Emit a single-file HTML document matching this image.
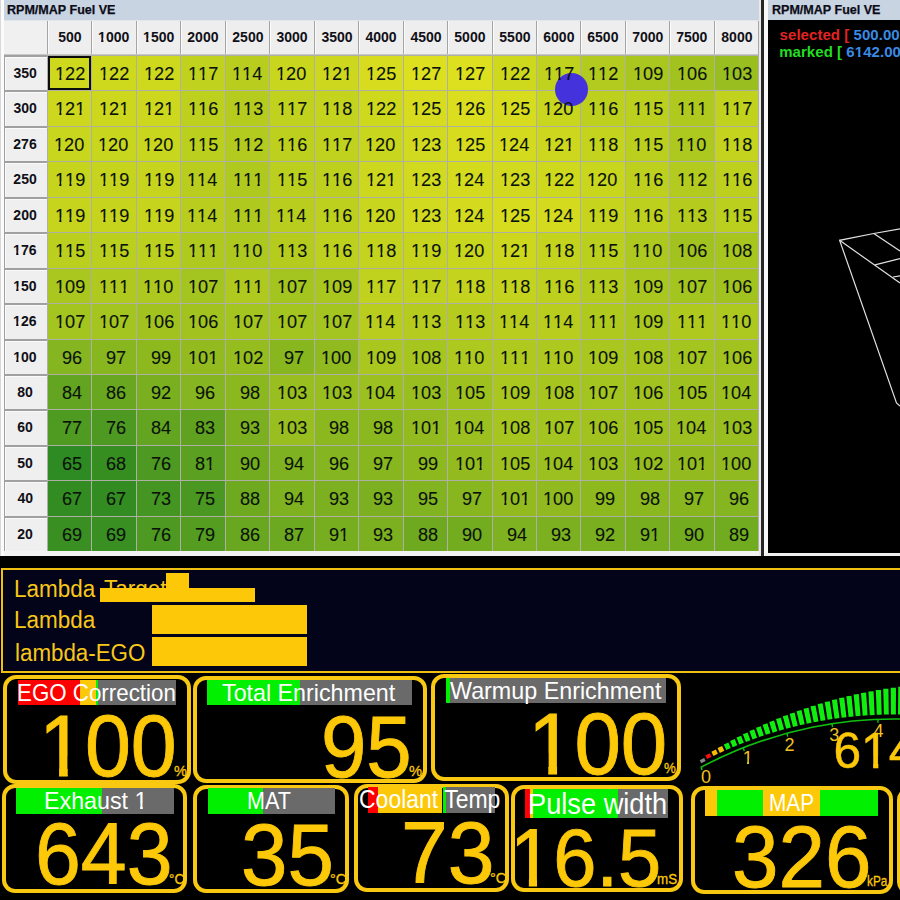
<!DOCTYPE html><html><head><meta charset="utf-8"><style>
html,body{margin:0;padding:0}
body{width:900px;height:900px;background:#000;overflow:hidden;position:relative;font-family:"Liberation Sans",sans-serif}
div{position:absolute;box-sizing:border-box}
.t{white-space:nowrap;line-height:1;transform-origin:0 0}
i.O{font-style:normal;display:inline-block;clip-path:polygon(-5% -5%,105% -5%,105% 0.6em,0.348em 0.6em,0.348em 110%,0.243em 110%,0.243em 0.6em,-5% 0.6em)}
i.ob{font-style:normal;display:inline-block;clip-path:polygon(-5% -5%,105% -5%,105% 0.55em,0.385em 0.55em,0.385em 110%,0.22em 110%,0.22em 0.55em,-5% 0.55em)}
i.o{font-style:normal;display:inline-block;clip-path:polygon(-5% -5%,105% -5%,105% 0.55em,0.355em 0.55em,0.355em 110%,0.238em 110%,0.238em 0.55em,-5% 0.55em)}
.g{border:4.2px solid #f9c810;border-radius:13px}
</style></head><body>

<div style="left:0;top:0;width:762px;height:556px;background:#f0f0f0"></div>
<div style="left:0;top:0;width:1px;height:556px;background:#d8d8d8"></div>
<div style="left:1px;top:0;width:2.5px;height:556px;background:#fbfbfb"></div>
<div style="left:3.5px;top:0;width:757px;height:20px;background:#c8d4e1"></div>
<div style="left:3.5px;top:20px;width:757px;height:1px;background:#e2e6ea"></div>
<div class="t" style="left:6.56px;top:3.48px;font-size:13.60px;color:#0c0c18;font-weight:bold;transform:scaleX(0.9224);-webkit-text-stroke:0.25px #0c0c18">RPM/MAP Fuel VE</div>
<div style="left:47.00px;top:21px;width:44.49px;height:34px;background:#eeeeee;border-left:1.8px solid #a4a4a4"><div style="left:0;top:0;width:1.3px;height:33px;background:#fafafa"></div></div>
<div class="t" style="left:58.24px;top:30.35px;font-size:14.00px;color:#101018;font-weight:bold;transform:scaleX(1.0000)">500</div>
<div style="left:91.00px;top:21px;width:44.49px;height:34px;background:#eeeeee;border-left:1.8px solid #a4a4a4"><div style="left:0;top:0;width:1.3px;height:33px;background:#fafafa"></div></div>
<div class="t" style="left:98.08px;top:30.35px;font-size:14.00px;color:#101018;font-weight:bold;transform:scaleX(1.0000)"><i class="ob">1</i>000</div>
<div style="left:136.00px;top:21px;width:44.49px;height:34px;background:#eeeeee;border-left:1.8px solid #a4a4a4"><div style="left:0;top:0;width:1.3px;height:33px;background:#fafafa"></div></div>
<div class="t" style="left:143.08px;top:30.35px;font-size:14.00px;color:#101018;font-weight:bold;transform:scaleX(1.0000)"><i class="ob">1</i>500</div>
<div style="left:180.00px;top:21px;width:44.49px;height:34px;background:#eeeeee;border-left:1.8px solid #a4a4a4"><div style="left:0;top:0;width:1.3px;height:33px;background:#fafafa"></div></div>
<div class="t" style="left:187.32px;top:30.35px;font-size:14.00px;color:#101018;font-weight:bold;transform:scaleX(1.0000)">2000</div>
<div style="left:225.00px;top:21px;width:44.49px;height:34px;background:#eeeeee;border-left:1.8px solid #a4a4a4"><div style="left:0;top:0;width:1.3px;height:33px;background:#fafafa"></div></div>
<div class="t" style="left:232.32px;top:30.35px;font-size:14.00px;color:#101018;font-weight:bold;transform:scaleX(1.0000)">2500</div>
<div style="left:269.00px;top:21px;width:44.49px;height:34px;background:#eeeeee;border-left:1.8px solid #a4a4a4"><div style="left:0;top:0;width:1.3px;height:33px;background:#fafafa"></div></div>
<div class="t" style="left:276.40px;top:30.35px;font-size:14.00px;color:#101018;font-weight:bold;transform:scaleX(1.0000)">3000</div>
<div style="left:314.00px;top:21px;width:44.49px;height:34px;background:#eeeeee;border-left:1.8px solid #a4a4a4"><div style="left:0;top:0;width:1.3px;height:33px;background:#fafafa"></div></div>
<div class="t" style="left:321.40px;top:30.35px;font-size:14.00px;color:#101018;font-weight:bold;transform:scaleX(1.0000)">3500</div>
<div style="left:358.00px;top:21px;width:44.49px;height:34px;background:#eeeeee;border-left:1.8px solid #a4a4a4"><div style="left:0;top:0;width:1.3px;height:33px;background:#fafafa"></div></div>
<div class="t" style="left:365.45px;top:30.35px;font-size:14.00px;color:#101018;font-weight:bold;transform:scaleX(1.0000)">4000</div>
<div style="left:403.00px;top:21px;width:44.49px;height:34px;background:#eeeeee;border-left:1.8px solid #a4a4a4"><div style="left:0;top:0;width:1.3px;height:33px;background:#fafafa"></div></div>
<div class="t" style="left:410.45px;top:30.35px;font-size:14.00px;color:#101018;font-weight:bold;transform:scaleX(1.0000)">4500</div>
<div style="left:447.00px;top:21px;width:44.49px;height:34px;background:#eeeeee;border-left:1.8px solid #a4a4a4"><div style="left:0;top:0;width:1.3px;height:33px;background:#fafafa"></div></div>
<div class="t" style="left:454.34px;top:30.35px;font-size:14.00px;color:#101018;font-weight:bold;transform:scaleX(1.0000)">5000</div>
<div style="left:492.00px;top:21px;width:44.49px;height:34px;background:#eeeeee;border-left:1.8px solid #a4a4a4"><div style="left:0;top:0;width:1.3px;height:33px;background:#fafafa"></div></div>
<div class="t" style="left:499.34px;top:30.35px;font-size:14.00px;color:#101018;font-weight:bold;transform:scaleX(1.0000)">5500</div>
<div style="left:536.00px;top:21px;width:44.49px;height:34px;background:#eeeeee;border-left:1.8px solid #a4a4a4"><div style="left:0;top:0;width:1.3px;height:33px;background:#fafafa"></div></div>
<div class="t" style="left:543.30px;top:30.35px;font-size:14.00px;color:#101018;font-weight:bold;transform:scaleX(1.0000)">6000</div>
<div style="left:580.00px;top:21px;width:44.49px;height:34px;background:#eeeeee;border-left:1.8px solid #a4a4a4"><div style="left:0;top:0;width:1.3px;height:33px;background:#fafafa"></div></div>
<div class="t" style="left:587.30px;top:30.35px;font-size:14.00px;color:#101018;font-weight:bold;transform:scaleX(1.0000)">6500</div>
<div style="left:625.00px;top:21px;width:44.49px;height:34px;background:#eeeeee;border-left:1.8px solid #a4a4a4"><div style="left:0;top:0;width:1.3px;height:33px;background:#fafafa"></div></div>
<div class="t" style="left:632.26px;top:30.35px;font-size:14.00px;color:#101018;font-weight:bold;transform:scaleX(1.0000)">7000</div>
<div style="left:669.00px;top:21px;width:44.49px;height:34px;background:#eeeeee;border-left:1.8px solid #a4a4a4"><div style="left:0;top:0;width:1.3px;height:33px;background:#fafafa"></div></div>
<div class="t" style="left:676.26px;top:30.35px;font-size:14.00px;color:#101018;font-weight:bold;transform:scaleX(1.0000)">7500</div>
<div style="left:714.00px;top:21px;width:44.49px;height:34px;background:#eeeeee;border-left:1.8px solid #a4a4a4"><div style="left:0;top:0;width:1.3px;height:33px;background:#fafafa"></div></div>
<div class="t" style="left:721.34px;top:30.35px;font-size:14.00px;color:#101018;font-weight:bold;transform:scaleX(1.0000)">8000</div>
<div style="left:758.00px;top:21px;width:1.3px;height:34px;background:#a4a4a4"></div>
<div style="left:3.5px;top:54.3px;width:754.94px;height:1px;background:#c8c8c8"></div>
<div style="left:3.5px;top:55.00px;width:1.5px;height:496.16px;background:#a8a8a8"></div>
<div style="left:47px;top:55px;width:712px;height:497px;background:#aeb0a6"></div>
<div style="left:3.5px;top:55px;width:43.50px;height:497px;background:#a0a0a0"></div>
<div style="left:5px;top:56.5px;width:42px;height:33.5px;background:#efefef;border-top:1px solid #fafafa;border-left:1px solid #fafafa"></div>
<div class="t" style="left:13.45px;top:65.75px;font-size:14.00px;color:#101018;font-weight:bold;transform:scaleX(1.0000)">350</div>
<div style="left:48px;top:56px;width:43px;height:34px;background:rgb(206,217,30)"></div>
<div style="left:92px;top:56px;width:44px;height:34px;background:rgb(206,217,30)"></div>
<div style="left:137px;top:56px;width:43px;height:34px;background:rgb(206,217,30)"></div>
<div style="left:181px;top:56px;width:44px;height:34px;background:rgb(192,210,30)"></div>
<div style="left:226px;top:56px;width:43px;height:34px;background:rgb(184,205,30)"></div>
<div style="left:270px;top:56px;width:44px;height:34px;background:rgb(201,214,30)"></div>
<div style="left:315px;top:56px;width:43px;height:34px;background:rgb(204,215,30)"></div>
<div style="left:359px;top:56px;width:44px;height:34px;background:rgb(215,221,30)"></div>
<div style="left:404px;top:56px;width:43px;height:34px;background:rgb(221,224,30)"></div>
<div style="left:448px;top:56px;width:44px;height:34px;background:rgb(221,224,30)"></div>
<div style="left:493px;top:56px;width:43px;height:34px;background:rgb(206,217,30)"></div>
<div style="left:537px;top:56px;width:43px;height:34px;background:rgb(192,210,30)"></div>
<div style="left:581px;top:56px;width:44px;height:34px;background:rgb(178,203,30)"></div>
<div style="left:626px;top:56px;width:43px;height:34px;background:rgb(170,199,31)"></div>
<div style="left:670px;top:56px;width:44px;height:34px;background:rgb(161,194,31)"></div>
<div style="left:715px;top:56px;width:43px;height:34px;background:rgb(153,190,31)"></div>
<div style="left:5px;top:91.5px;width:42px;height:34.5px;background:#efefef;border-top:1px solid #fafafa;border-left:1px solid #fafafa"></div>
<div class="t" style="left:13.45px;top:100.75px;font-size:14.00px;color:#101018;font-weight:bold;transform:scaleX(1.0000)">300</div>
<div style="left:48px;top:91px;width:43px;height:35px;background:rgb(204,215,30)"></div>
<div style="left:92px;top:91px;width:44px;height:35px;background:rgb(204,215,30)"></div>
<div style="left:137px;top:91px;width:43px;height:35px;background:rgb(204,215,30)"></div>
<div style="left:181px;top:91px;width:44px;height:35px;background:rgb(189,208,30)"></div>
<div style="left:226px;top:91px;width:43px;height:35px;background:rgb(181,204,30)"></div>
<div style="left:270px;top:91px;width:44px;height:35px;background:rgb(192,210,30)"></div>
<div style="left:315px;top:91px;width:43px;height:35px;background:rgb(195,211,30)"></div>
<div style="left:359px;top:91px;width:44px;height:35px;background:rgb(206,217,30)"></div>
<div style="left:404px;top:91px;width:43px;height:35px;background:rgb(215,221,30)"></div>
<div style="left:448px;top:91px;width:44px;height:35px;background:rgb(218,222,30)"></div>
<div style="left:493px;top:91px;width:43px;height:35px;background:rgb(215,221,30)"></div>
<div style="left:537px;top:91px;width:43px;height:35px;background:rgb(201,214,30)"></div>
<div style="left:581px;top:91px;width:44px;height:35px;background:rgb(189,208,30)"></div>
<div style="left:626px;top:91px;width:43px;height:35px;background:rgb(187,207,30)"></div>
<div style="left:670px;top:91px;width:44px;height:35px;background:rgb(175,201,31)"></div>
<div style="left:715px;top:91px;width:43px;height:35px;background:rgb(192,210,30)"></div>
<div style="left:5px;top:127.5px;width:42px;height:33.5px;background:#efefef;border-top:1px solid #fafafa;border-left:1px solid #fafafa"></div>
<div class="t" style="left:13.33px;top:136.75px;font-size:14.00px;color:#101018;font-weight:bold;transform:scaleX(1.0000)">276</div>
<div style="left:48px;top:127px;width:43px;height:34px;background:rgb(201,214,30)"></div>
<div style="left:92px;top:127px;width:44px;height:34px;background:rgb(201,214,30)"></div>
<div style="left:137px;top:127px;width:43px;height:34px;background:rgb(201,214,30)"></div>
<div style="left:181px;top:127px;width:44px;height:34px;background:rgb(187,207,30)"></div>
<div style="left:226px;top:127px;width:43px;height:34px;background:rgb(178,203,30)"></div>
<div style="left:270px;top:127px;width:44px;height:34px;background:rgb(189,208,30)"></div>
<div style="left:315px;top:127px;width:43px;height:34px;background:rgb(192,210,30)"></div>
<div style="left:359px;top:127px;width:44px;height:34px;background:rgb(201,214,30)"></div>
<div style="left:404px;top:127px;width:43px;height:34px;background:rgb(209,218,30)"></div>
<div style="left:448px;top:127px;width:44px;height:34px;background:rgb(215,221,30)"></div>
<div style="left:493px;top:127px;width:43px;height:34px;background:rgb(212,219,30)"></div>
<div style="left:537px;top:127px;width:43px;height:34px;background:rgb(204,215,30)"></div>
<div style="left:581px;top:127px;width:44px;height:34px;background:rgb(195,211,30)"></div>
<div style="left:626px;top:127px;width:43px;height:34px;background:rgb(187,207,30)"></div>
<div style="left:670px;top:127px;width:44px;height:34px;background:rgb(173,200,31)"></div>
<div style="left:715px;top:127px;width:43px;height:34px;background:rgb(195,211,30)"></div>
<div style="left:5px;top:162.5px;width:42px;height:34.5px;background:#efefef;border-top:1px solid #fafafa;border-left:1px solid #fafafa"></div>
<div class="t" style="left:13.37px;top:171.75px;font-size:14.00px;color:#101018;font-weight:bold;transform:scaleX(1.0000)">250</div>
<div style="left:48px;top:162px;width:43px;height:35px;background:rgb(198,212,30)"></div>
<div style="left:92px;top:162px;width:44px;height:35px;background:rgb(198,212,30)"></div>
<div style="left:137px;top:162px;width:43px;height:35px;background:rgb(198,212,30)"></div>
<div style="left:181px;top:162px;width:44px;height:35px;background:rgb(184,205,30)"></div>
<div style="left:226px;top:162px;width:43px;height:35px;background:rgb(175,201,31)"></div>
<div style="left:270px;top:162px;width:44px;height:35px;background:rgb(187,207,30)"></div>
<div style="left:315px;top:162px;width:43px;height:35px;background:rgb(189,208,30)"></div>
<div style="left:359px;top:162px;width:44px;height:35px;background:rgb(204,215,30)"></div>
<div style="left:404px;top:162px;width:43px;height:35px;background:rgb(209,218,30)"></div>
<div style="left:448px;top:162px;width:44px;height:35px;background:rgb(212,219,30)"></div>
<div style="left:493px;top:162px;width:43px;height:35px;background:rgb(209,218,30)"></div>
<div style="left:537px;top:162px;width:43px;height:35px;background:rgb(206,217,30)"></div>
<div style="left:581px;top:162px;width:44px;height:35px;background:rgb(201,214,30)"></div>
<div style="left:626px;top:162px;width:43px;height:35px;background:rgb(189,208,30)"></div>
<div style="left:670px;top:162px;width:44px;height:35px;background:rgb(178,203,30)"></div>
<div style="left:715px;top:162px;width:43px;height:35px;background:rgb(189,208,30)"></div>
<div style="left:5px;top:198.5px;width:42px;height:33.5px;background:#efefef;border-top:1px solid #fafafa;border-left:1px solid #fafafa"></div>
<div class="t" style="left:13.37px;top:207.75px;font-size:14.00px;color:#101018;font-weight:bold;transform:scaleX(1.0000)">200</div>
<div style="left:48px;top:198px;width:43px;height:34px;background:rgb(198,212,30)"></div>
<div style="left:92px;top:198px;width:44px;height:34px;background:rgb(198,212,30)"></div>
<div style="left:137px;top:198px;width:43px;height:34px;background:rgb(198,212,30)"></div>
<div style="left:181px;top:198px;width:44px;height:34px;background:rgb(184,205,30)"></div>
<div style="left:226px;top:198px;width:43px;height:34px;background:rgb(175,201,31)"></div>
<div style="left:270px;top:198px;width:44px;height:34px;background:rgb(184,205,30)"></div>
<div style="left:315px;top:198px;width:43px;height:34px;background:rgb(189,208,30)"></div>
<div style="left:359px;top:198px;width:44px;height:34px;background:rgb(201,214,30)"></div>
<div style="left:404px;top:198px;width:43px;height:34px;background:rgb(209,218,30)"></div>
<div style="left:448px;top:198px;width:44px;height:34px;background:rgb(212,219,30)"></div>
<div style="left:493px;top:198px;width:43px;height:34px;background:rgb(215,221,30)"></div>
<div style="left:537px;top:198px;width:43px;height:34px;background:rgb(212,219,30)"></div>
<div style="left:581px;top:198px;width:44px;height:34px;background:rgb(198,212,30)"></div>
<div style="left:626px;top:198px;width:43px;height:34px;background:rgb(189,208,30)"></div>
<div style="left:670px;top:198px;width:44px;height:34px;background:rgb(181,204,30)"></div>
<div style="left:715px;top:198px;width:43px;height:34px;background:rgb(187,207,30)"></div>
<div style="left:5px;top:233.5px;width:42px;height:34.5px;background:#efefef;border-top:1px solid #fafafa;border-left:1px solid #fafafa"></div>
<div class="t" style="left:13.10px;top:242.75px;font-size:14.00px;color:#101018;font-weight:bold;transform:scaleX(1.0000)"><i class="ob">1</i>76</div>
<div style="left:48px;top:233px;width:43px;height:35px;background:rgb(187,207,30)"></div>
<div style="left:92px;top:233px;width:44px;height:35px;background:rgb(187,207,30)"></div>
<div style="left:137px;top:233px;width:43px;height:35px;background:rgb(187,207,30)"></div>
<div style="left:181px;top:233px;width:44px;height:35px;background:rgb(175,201,31)"></div>
<div style="left:226px;top:233px;width:43px;height:35px;background:rgb(173,200,31)"></div>
<div style="left:270px;top:233px;width:44px;height:35px;background:rgb(181,204,30)"></div>
<div style="left:315px;top:233px;width:43px;height:35px;background:rgb(189,208,30)"></div>
<div style="left:359px;top:233px;width:44px;height:35px;background:rgb(195,211,30)"></div>
<div style="left:404px;top:233px;width:43px;height:35px;background:rgb(198,212,30)"></div>
<div style="left:448px;top:233px;width:44px;height:35px;background:rgb(201,214,30)"></div>
<div style="left:493px;top:233px;width:43px;height:35px;background:rgb(204,215,30)"></div>
<div style="left:537px;top:233px;width:43px;height:35px;background:rgb(195,211,30)"></div>
<div style="left:581px;top:233px;width:44px;height:35px;background:rgb(187,207,30)"></div>
<div style="left:626px;top:233px;width:43px;height:35px;background:rgb(173,200,31)"></div>
<div style="left:670px;top:233px;width:44px;height:35px;background:rgb(161,194,31)"></div>
<div style="left:715px;top:233px;width:43px;height:35px;background:rgb(167,197,31)"></div>
<div style="left:5px;top:269.5px;width:42px;height:33.5px;background:#efefef;border-top:1px solid #fafafa;border-left:1px solid #fafafa"></div>
<div class="t" style="left:13.13px;top:278.75px;font-size:14.00px;color:#101018;font-weight:bold;transform:scaleX(1.0000)"><i class="ob">1</i>50</div>
<div style="left:48px;top:269px;width:43px;height:34px;background:rgb(170,199,31)"></div>
<div style="left:92px;top:269px;width:44px;height:34px;background:rgb(175,201,31)"></div>
<div style="left:137px;top:269px;width:43px;height:34px;background:rgb(173,200,31)"></div>
<div style="left:181px;top:269px;width:44px;height:34px;background:rgb(164,196,31)"></div>
<div style="left:226px;top:269px;width:43px;height:34px;background:rgb(175,201,31)"></div>
<div style="left:270px;top:269px;width:44px;height:34px;background:rgb(164,196,31)"></div>
<div style="left:315px;top:269px;width:43px;height:34px;background:rgb(170,199,31)"></div>
<div style="left:359px;top:269px;width:44px;height:34px;background:rgb(192,210,30)"></div>
<div style="left:404px;top:269px;width:43px;height:34px;background:rgb(192,210,30)"></div>
<div style="left:448px;top:269px;width:44px;height:34px;background:rgb(195,211,30)"></div>
<div style="left:493px;top:269px;width:43px;height:34px;background:rgb(195,211,30)"></div>
<div style="left:537px;top:269px;width:43px;height:34px;background:rgb(189,208,30)"></div>
<div style="left:581px;top:269px;width:44px;height:34px;background:rgb(181,204,30)"></div>
<div style="left:626px;top:269px;width:43px;height:34px;background:rgb(170,199,31)"></div>
<div style="left:670px;top:269px;width:44px;height:34px;background:rgb(164,196,31)"></div>
<div style="left:715px;top:269px;width:43px;height:34px;background:rgb(161,194,31)"></div>
<div style="left:5px;top:304.5px;width:42px;height:34.5px;background:#efefef;border-top:1px solid #fafafa;border-left:1px solid #fafafa"></div>
<div class="t" style="left:13.10px;top:313.75px;font-size:14.00px;color:#101018;font-weight:bold;transform:scaleX(1.0000)"><i class="ob">1</i>26</div>
<div style="left:48px;top:304px;width:43px;height:35px;background:rgb(164,196,31)"></div>
<div style="left:92px;top:304px;width:44px;height:35px;background:rgb(164,196,31)"></div>
<div style="left:137px;top:304px;width:43px;height:35px;background:rgb(161,194,31)"></div>
<div style="left:181px;top:304px;width:44px;height:35px;background:rgb(161,194,31)"></div>
<div style="left:226px;top:304px;width:43px;height:35px;background:rgb(164,196,31)"></div>
<div style="left:270px;top:304px;width:44px;height:35px;background:rgb(164,196,31)"></div>
<div style="left:315px;top:304px;width:43px;height:35px;background:rgb(164,196,31)"></div>
<div style="left:359px;top:304px;width:44px;height:35px;background:rgb(184,205,30)"></div>
<div style="left:404px;top:304px;width:43px;height:35px;background:rgb(181,204,30)"></div>
<div style="left:448px;top:304px;width:44px;height:35px;background:rgb(181,204,30)"></div>
<div style="left:493px;top:304px;width:43px;height:35px;background:rgb(184,205,30)"></div>
<div style="left:537px;top:304px;width:43px;height:35px;background:rgb(184,205,30)"></div>
<div style="left:581px;top:304px;width:44px;height:35px;background:rgb(175,201,31)"></div>
<div style="left:626px;top:304px;width:43px;height:35px;background:rgb(170,199,31)"></div>
<div style="left:670px;top:304px;width:44px;height:35px;background:rgb(175,201,31)"></div>
<div style="left:715px;top:304px;width:43px;height:35px;background:rgb(173,200,31)"></div>
<div style="left:5px;top:340.5px;width:42px;height:33.5px;background:#efefef;border-top:1px solid #fafafa;border-left:1px solid #fafafa"></div>
<div class="t" style="left:13.13px;top:349.75px;font-size:14.00px;color:#101018;font-weight:bold;transform:scaleX(1.0000)"><i class="ob">1</i>00</div>
<div style="left:48px;top:340px;width:43px;height:34px;background:rgb(133,181,32)"></div>
<div style="left:92px;top:340px;width:44px;height:34px;background:rgb(136,182,31)"></div>
<div style="left:137px;top:340px;width:43px;height:34px;background:rgb(141,185,31)"></div>
<div style="left:181px;top:340px;width:44px;height:34px;background:rgb(147,187,31)"></div>
<div style="left:226px;top:340px;width:43px;height:34px;background:rgb(150,189,31)"></div>
<div style="left:270px;top:340px;width:44px;height:34px;background:rgb(136,182,31)"></div>
<div style="left:315px;top:340px;width:43px;height:34px;background:rgb(144,186,31)"></div>
<div style="left:359px;top:340px;width:44px;height:34px;background:rgb(170,199,31)"></div>
<div style="left:404px;top:340px;width:43px;height:34px;background:rgb(167,197,31)"></div>
<div style="left:448px;top:340px;width:44px;height:34px;background:rgb(173,200,31)"></div>
<div style="left:493px;top:340px;width:43px;height:34px;background:rgb(175,201,31)"></div>
<div style="left:537px;top:340px;width:43px;height:34px;background:rgb(173,200,31)"></div>
<div style="left:581px;top:340px;width:44px;height:34px;background:rgb(170,199,31)"></div>
<div style="left:626px;top:340px;width:43px;height:34px;background:rgb(167,197,31)"></div>
<div style="left:670px;top:340px;width:44px;height:34px;background:rgb(164,196,31)"></div>
<div style="left:715px;top:340px;width:43px;height:34px;background:rgb(161,194,31)"></div>
<div style="left:5px;top:375.5px;width:42px;height:33.5px;background:#efefef;border-top:1px solid #fafafa;border-left:1px solid #fafafa"></div>
<div class="t" style="left:17.28px;top:384.75px;font-size:14.00px;color:#101018;font-weight:bold;transform:scaleX(1.0000)">80</div>
<div style="left:48px;top:375px;width:43px;height:34px;background:rgb(99,164,32)"></div>
<div style="left:92px;top:375px;width:44px;height:34px;background:rgb(105,167,32)"></div>
<div style="left:137px;top:375px;width:43px;height:34px;background:rgb(122,175,32)"></div>
<div style="left:181px;top:375px;width:44px;height:34px;background:rgb(133,181,32)"></div>
<div style="left:226px;top:375px;width:43px;height:34px;background:rgb(139,183,31)"></div>
<div style="left:270px;top:375px;width:44px;height:34px;background:rgb(153,190,31)"></div>
<div style="left:315px;top:375px;width:43px;height:34px;background:rgb(153,190,31)"></div>
<div style="left:359px;top:375px;width:44px;height:34px;background:rgb(156,192,31)"></div>
<div style="left:404px;top:375px;width:43px;height:34px;background:rgb(153,190,31)"></div>
<div style="left:448px;top:375px;width:44px;height:34px;background:rgb(158,193,31)"></div>
<div style="left:493px;top:375px;width:43px;height:34px;background:rgb(170,199,31)"></div>
<div style="left:537px;top:375px;width:43px;height:34px;background:rgb(167,197,31)"></div>
<div style="left:581px;top:375px;width:44px;height:34px;background:rgb(164,196,31)"></div>
<div style="left:626px;top:375px;width:43px;height:34px;background:rgb(161,194,31)"></div>
<div style="left:670px;top:375px;width:44px;height:34px;background:rgb(158,193,31)"></div>
<div style="left:715px;top:375px;width:43px;height:34px;background:rgb(156,192,31)"></div>
<div style="left:5px;top:410.5px;width:42px;height:34.5px;background:#efefef;border-top:1px solid #fafafa;border-left:1px solid #fafafa"></div>
<div class="t" style="left:17.24px;top:419.75px;font-size:14.00px;color:#101018;font-weight:bold;transform:scaleX(1.0000)">60</div>
<div style="left:48px;top:410px;width:43px;height:35px;background:rgb(79,154,33)"></div>
<div style="left:92px;top:410px;width:44px;height:35px;background:rgb(77,153,33)"></div>
<div style="left:137px;top:410px;width:43px;height:35px;background:rgb(99,164,32)"></div>
<div style="left:181px;top:410px;width:44px;height:35px;background:rgb(96,162,32)"></div>
<div style="left:226px;top:410px;width:43px;height:35px;background:rgb(125,176,32)"></div>
<div style="left:270px;top:410px;width:44px;height:35px;background:rgb(153,190,31)"></div>
<div style="left:315px;top:410px;width:43px;height:35px;background:rgb(139,183,31)"></div>
<div style="left:359px;top:410px;width:44px;height:35px;background:rgb(139,183,31)"></div>
<div style="left:404px;top:410px;width:43px;height:35px;background:rgb(147,187,31)"></div>
<div style="left:448px;top:410px;width:44px;height:35px;background:rgb(156,192,31)"></div>
<div style="left:493px;top:410px;width:43px;height:35px;background:rgb(167,197,31)"></div>
<div style="left:537px;top:410px;width:43px;height:35px;background:rgb(164,196,31)"></div>
<div style="left:581px;top:410px;width:44px;height:35px;background:rgb(161,194,31)"></div>
<div style="left:626px;top:410px;width:43px;height:35px;background:rgb(158,193,31)"></div>
<div style="left:670px;top:410px;width:44px;height:35px;background:rgb(156,192,31)"></div>
<div style="left:715px;top:410px;width:43px;height:35px;background:rgb(153,190,31)"></div>
<div style="left:5px;top:446.5px;width:42px;height:33.5px;background:#efefef;border-top:1px solid #fafafa;border-left:1px solid #fafafa"></div>
<div class="t" style="left:17.29px;top:455.75px;font-size:14.00px;color:#101018;font-weight:bold;transform:scaleX(1.0000)">50</div>
<div style="left:48px;top:446px;width:43px;height:34px;background:rgb(46,138,34)"></div>
<div style="left:92px;top:446px;width:44px;height:34px;background:rgb(54,142,33)"></div>
<div style="left:137px;top:446px;width:43px;height:34px;background:rgb(77,153,33)"></div>
<div style="left:181px;top:446px;width:44px;height:34px;background:rgb(91,160,32)"></div>
<div style="left:226px;top:446px;width:43px;height:34px;background:rgb(116,172,32)"></div>
<div style="left:270px;top:446px;width:44px;height:34px;background:rgb(127,178,32)"></div>
<div style="left:315px;top:446px;width:43px;height:34px;background:rgb(133,181,32)"></div>
<div style="left:359px;top:446px;width:44px;height:34px;background:rgb(136,182,31)"></div>
<div style="left:404px;top:446px;width:43px;height:34px;background:rgb(141,185,31)"></div>
<div style="left:448px;top:446px;width:44px;height:34px;background:rgb(147,187,31)"></div>
<div style="left:493px;top:446px;width:43px;height:34px;background:rgb(158,193,31)"></div>
<div style="left:537px;top:446px;width:43px;height:34px;background:rgb(156,192,31)"></div>
<div style="left:581px;top:446px;width:44px;height:34px;background:rgb(153,190,31)"></div>
<div style="left:626px;top:446px;width:43px;height:34px;background:rgb(150,189,31)"></div>
<div style="left:670px;top:446px;width:44px;height:34px;background:rgb(147,187,31)"></div>
<div style="left:715px;top:446px;width:43px;height:34px;background:rgb(144,186,31)"></div>
<div style="left:5px;top:481.5px;width:42px;height:34.5px;background:#efefef;border-top:1px solid #fafafa;border-left:1px solid #fafafa"></div>
<div class="t" style="left:17.40px;top:490.75px;font-size:14.00px;color:#101018;font-weight:bold;transform:scaleX(1.0000)">40</div>
<div style="left:48px;top:481px;width:43px;height:35px;background:rgb(51,140,33)"></div>
<div style="left:92px;top:481px;width:44px;height:35px;background:rgb(51,140,33)"></div>
<div style="left:137px;top:481px;width:43px;height:35px;background:rgb(68,149,33)"></div>
<div style="left:181px;top:481px;width:44px;height:35px;background:rgb(74,151,33)"></div>
<div style="left:226px;top:481px;width:43px;height:35px;background:rgb(110,169,32)"></div>
<div style="left:270px;top:481px;width:44px;height:35px;background:rgb(127,178,32)"></div>
<div style="left:315px;top:481px;width:43px;height:35px;background:rgb(125,176,32)"></div>
<div style="left:359px;top:481px;width:44px;height:35px;background:rgb(125,176,32)"></div>
<div style="left:404px;top:481px;width:43px;height:35px;background:rgb(130,179,32)"></div>
<div style="left:448px;top:481px;width:44px;height:35px;background:rgb(136,182,31)"></div>
<div style="left:493px;top:481px;width:43px;height:35px;background:rgb(147,187,31)"></div>
<div style="left:537px;top:481px;width:43px;height:35px;background:rgb(144,186,31)"></div>
<div style="left:581px;top:481px;width:44px;height:35px;background:rgb(141,185,31)"></div>
<div style="left:626px;top:481px;width:43px;height:35px;background:rgb(139,183,31)"></div>
<div style="left:670px;top:481px;width:44px;height:35px;background:rgb(136,182,31)"></div>
<div style="left:715px;top:481px;width:43px;height:35px;background:rgb(133,181,32)"></div>
<div style="left:5px;top:517.5px;width:42px;height:33.5px;background:#efefef;border-top:1px solid #fafafa;border-left:1px solid #fafafa"></div>
<div class="t" style="left:17.26px;top:526.75px;font-size:14.00px;color:#101018;font-weight:bold;transform:scaleX(1.0000)">20</div>
<div style="left:48px;top:517px;width:43px;height:34px;background:rgb(57,143,33)"></div>
<div style="left:92px;top:517px;width:44px;height:34px;background:rgb(57,143,33)"></div>
<div style="left:137px;top:517px;width:43px;height:34px;background:rgb(77,153,33)"></div>
<div style="left:181px;top:517px;width:44px;height:34px;background:rgb(85,157,33)"></div>
<div style="left:226px;top:517px;width:43px;height:34px;background:rgb(105,167,32)"></div>
<div style="left:270px;top:517px;width:44px;height:34px;background:rgb(108,168,32)"></div>
<div style="left:315px;top:517px;width:43px;height:34px;background:rgb(119,174,32)"></div>
<div style="left:359px;top:517px;width:44px;height:34px;background:rgb(125,176,32)"></div>
<div style="left:404px;top:517px;width:43px;height:34px;background:rgb(110,169,32)"></div>
<div style="left:448px;top:517px;width:44px;height:34px;background:rgb(116,172,32)"></div>
<div style="left:493px;top:517px;width:43px;height:34px;background:rgb(127,178,32)"></div>
<div style="left:537px;top:517px;width:43px;height:34px;background:rgb(125,176,32)"></div>
<div style="left:581px;top:517px;width:44px;height:34px;background:rgb(122,175,32)"></div>
<div style="left:626px;top:517px;width:43px;height:34px;background:rgb(119,174,32)"></div>
<div style="left:670px;top:517px;width:44px;height:34px;background:rgb(116,172,32)"></div>
<div style="left:715px;top:517px;width:43px;height:34px;background:rgb(113,171,32)"></div>
<div style="left:47.8px;top:56.1px;width:43.3px;height:33.6px;border:2.3px solid #0c0c0c"></div>
<div style="left:555.3px;top:73px;width:32.8px;height:32.8px;border-radius:50%;background:#4433dd"></div>
<div class="t" style="left:54.59px;top:65.08px;font-size:18.80px;color:#0a120a;transform:scaleX(0.9650);-webkit-text-stroke:0.1px #0a120a"><i class="o">1</i>22</div>
<div class="t" style="left:98.59px;top:65.08px;font-size:18.80px;color:#0a120a;transform:scaleX(0.9650);-webkit-text-stroke:0.1px #0a120a"><i class="o">1</i>22</div>
<div class="t" style="left:143.59px;top:65.08px;font-size:18.80px;color:#0a120a;transform:scaleX(0.9650);-webkit-text-stroke:0.1px #0a120a"><i class="o">1</i>22</div>
<div class="t" style="left:187.59px;top:65.08px;font-size:18.80px;color:#0a120a;transform:scaleX(0.9650);-webkit-text-stroke:0.1px #0a120a"><i class="o">1</i><i class="o">1</i>7</div>
<div class="t" style="left:232.40px;top:65.08px;font-size:18.80px;color:#0a120a;transform:scaleX(0.9650);-webkit-text-stroke:0.1px #0a120a"><i class="o">1</i><i class="o">1</i>4</div>
<div class="t" style="left:276.49px;top:65.08px;font-size:18.80px;color:#0a120a;transform:scaleX(0.9650);-webkit-text-stroke:0.1px #0a120a"><i class="o">1</i>20</div>
<div class="t" style="left:321.58px;top:65.08px;font-size:18.80px;color:#0a120a;transform:scaleX(0.9650);-webkit-text-stroke:0.1px #0a120a"><i class="o">1</i>2<i class="o">1</i></div>
<div class="t" style="left:365.52px;top:65.08px;font-size:18.80px;color:#0a120a;transform:scaleX(0.9650);-webkit-text-stroke:0.1px #0a120a"><i class="o">1</i>25</div>
<div class="t" style="left:410.59px;top:65.08px;font-size:18.80px;color:#0a120a;transform:scaleX(0.9650);-webkit-text-stroke:0.1px #0a120a"><i class="o">1</i>27</div>
<div class="t" style="left:454.59px;top:65.08px;font-size:18.80px;color:#0a120a;transform:scaleX(0.9650);-webkit-text-stroke:0.1px #0a120a"><i class="o">1</i>27</div>
<div class="t" style="left:499.59px;top:65.08px;font-size:18.80px;color:#0a120a;transform:scaleX(0.9650);-webkit-text-stroke:0.1px #0a120a"><i class="o">1</i>22</div>
<div class="t" style="left:543.59px;top:65.08px;font-size:18.80px;color:#0a120a;transform:scaleX(0.9650);-webkit-text-stroke:0.1px #0a120a"><i class="o">1</i><i class="o">1</i>7</div>
<div class="t" style="left:587.59px;top:65.08px;font-size:18.80px;color:#0a120a;transform:scaleX(0.9650);-webkit-text-stroke:0.1px #0a120a"><i class="o">1</i><i class="o">1</i>2</div>
<div class="t" style="left:632.57px;top:65.08px;font-size:18.80px;color:#0a120a;transform:scaleX(0.9650);-webkit-text-stroke:0.1px #0a120a"><i class="o">1</i>09</div>
<div class="t" style="left:676.54px;top:65.08px;font-size:18.80px;color:#0a120a;transform:scaleX(0.9650);-webkit-text-stroke:0.1px #0a120a"><i class="o">1</i>06</div>
<div class="t" style="left:721.54px;top:65.08px;font-size:18.80px;color:#0a120a;transform:scaleX(0.9650);-webkit-text-stroke:0.1px #0a120a"><i class="o">1</i>03</div>
<div class="t" style="left:54.58px;top:100.08px;font-size:18.80px;color:#0a120a;transform:scaleX(0.9650);-webkit-text-stroke:0.1px #0a120a"><i class="o">1</i>2<i class="o">1</i></div>
<div class="t" style="left:98.58px;top:100.08px;font-size:18.80px;color:#0a120a;transform:scaleX(0.9650);-webkit-text-stroke:0.1px #0a120a"><i class="o">1</i>2<i class="o">1</i></div>
<div class="t" style="left:143.58px;top:100.08px;font-size:18.80px;color:#0a120a;transform:scaleX(0.9650);-webkit-text-stroke:0.1px #0a120a"><i class="o">1</i>2<i class="o">1</i></div>
<div class="t" style="left:187.54px;top:100.08px;font-size:18.80px;color:#0a120a;transform:scaleX(0.9650);-webkit-text-stroke:0.1px #0a120a"><i class="o">1</i><i class="o">1</i>6</div>
<div class="t" style="left:232.54px;top:100.08px;font-size:18.80px;color:#0a120a;transform:scaleX(0.9650);-webkit-text-stroke:0.1px #0a120a"><i class="o">1</i><i class="o">1</i>3</div>
<div class="t" style="left:276.59px;top:100.08px;font-size:18.80px;color:#0a120a;transform:scaleX(0.9650);-webkit-text-stroke:0.1px #0a120a"><i class="o">1</i><i class="o">1</i>7</div>
<div class="t" style="left:321.53px;top:100.08px;font-size:18.80px;color:#0a120a;transform:scaleX(0.9650);-webkit-text-stroke:0.1px #0a120a"><i class="o">1</i><i class="o">1</i>8</div>
<div class="t" style="left:365.59px;top:100.08px;font-size:18.80px;color:#0a120a;transform:scaleX(0.9650);-webkit-text-stroke:0.1px #0a120a"><i class="o">1</i>22</div>
<div class="t" style="left:410.52px;top:100.08px;font-size:18.80px;color:#0a120a;transform:scaleX(0.9650);-webkit-text-stroke:0.1px #0a120a"><i class="o">1</i>25</div>
<div class="t" style="left:454.54px;top:100.08px;font-size:18.80px;color:#0a120a;transform:scaleX(0.9650);-webkit-text-stroke:0.1px #0a120a"><i class="o">1</i>26</div>
<div class="t" style="left:499.52px;top:100.08px;font-size:18.80px;color:#0a120a;transform:scaleX(0.9650);-webkit-text-stroke:0.1px #0a120a"><i class="o">1</i>25</div>
<div class="t" style="left:543.49px;top:100.08px;font-size:18.80px;color:#0a120a;transform:scaleX(0.9650);-webkit-text-stroke:0.1px #0a120a"><i class="o">1</i>20</div>
<div class="t" style="left:587.54px;top:100.08px;font-size:18.80px;color:#0a120a;transform:scaleX(0.9650);-webkit-text-stroke:0.1px #0a120a"><i class="o">1</i><i class="o">1</i>6</div>
<div class="t" style="left:632.52px;top:100.08px;font-size:18.80px;color:#0a120a;transform:scaleX(0.9650);-webkit-text-stroke:0.1px #0a120a"><i class="o">1</i><i class="o">1</i>5</div>
<div class="t" style="left:676.58px;top:100.08px;font-size:18.80px;color:#0a120a;transform:scaleX(0.9650);-webkit-text-stroke:0.1px #0a120a"><i class="o">1</i><i class="o">1</i><i class="o">1</i></div>
<div class="t" style="left:721.59px;top:100.08px;font-size:18.80px;color:#0a120a;transform:scaleX(0.9650);-webkit-text-stroke:0.1px #0a120a"><i class="o">1</i><i class="o">1</i>7</div>
<div class="t" style="left:54.49px;top:136.08px;font-size:18.80px;color:#0a120a;transform:scaleX(0.9650);-webkit-text-stroke:0.1px #0a120a"><i class="o">1</i>20</div>
<div class="t" style="left:98.49px;top:136.08px;font-size:18.80px;color:#0a120a;transform:scaleX(0.9650);-webkit-text-stroke:0.1px #0a120a"><i class="o">1</i>20</div>
<div class="t" style="left:143.49px;top:136.08px;font-size:18.80px;color:#0a120a;transform:scaleX(0.9650);-webkit-text-stroke:0.1px #0a120a"><i class="o">1</i>20</div>
<div class="t" style="left:187.52px;top:136.08px;font-size:18.80px;color:#0a120a;transform:scaleX(0.9650);-webkit-text-stroke:0.1px #0a120a"><i class="o">1</i><i class="o">1</i>5</div>
<div class="t" style="left:232.59px;top:136.08px;font-size:18.80px;color:#0a120a;transform:scaleX(0.9650);-webkit-text-stroke:0.1px #0a120a"><i class="o">1</i><i class="o">1</i>2</div>
<div class="t" style="left:276.54px;top:136.08px;font-size:18.80px;color:#0a120a;transform:scaleX(0.9650);-webkit-text-stroke:0.1px #0a120a"><i class="o">1</i><i class="o">1</i>6</div>
<div class="t" style="left:321.59px;top:136.08px;font-size:18.80px;color:#0a120a;transform:scaleX(0.9650);-webkit-text-stroke:0.1px #0a120a"><i class="o">1</i><i class="o">1</i>7</div>
<div class="t" style="left:365.49px;top:136.08px;font-size:18.80px;color:#0a120a;transform:scaleX(0.9650);-webkit-text-stroke:0.1px #0a120a"><i class="o">1</i>20</div>
<div class="t" style="left:410.54px;top:136.08px;font-size:18.80px;color:#0a120a;transform:scaleX(0.9650);-webkit-text-stroke:0.1px #0a120a"><i class="o">1</i>23</div>
<div class="t" style="left:454.52px;top:136.08px;font-size:18.80px;color:#0a120a;transform:scaleX(0.9650);-webkit-text-stroke:0.1px #0a120a"><i class="o">1</i>25</div>
<div class="t" style="left:499.40px;top:136.08px;font-size:18.80px;color:#0a120a;transform:scaleX(0.9650);-webkit-text-stroke:0.1px #0a120a"><i class="o">1</i>24</div>
<div class="t" style="left:543.58px;top:136.08px;font-size:18.80px;color:#0a120a;transform:scaleX(0.9650);-webkit-text-stroke:0.1px #0a120a"><i class="o">1</i>2<i class="o">1</i></div>
<div class="t" style="left:587.53px;top:136.08px;font-size:18.80px;color:#0a120a;transform:scaleX(0.9650);-webkit-text-stroke:0.1px #0a120a"><i class="o">1</i><i class="o">1</i>8</div>
<div class="t" style="left:632.52px;top:136.08px;font-size:18.80px;color:#0a120a;transform:scaleX(0.9650);-webkit-text-stroke:0.1px #0a120a"><i class="o">1</i><i class="o">1</i>5</div>
<div class="t" style="left:676.49px;top:136.08px;font-size:18.80px;color:#0a120a;transform:scaleX(0.9650);-webkit-text-stroke:0.1px #0a120a"><i class="o">1</i><i class="o">1</i>0</div>
<div class="t" style="left:721.53px;top:136.08px;font-size:18.80px;color:#0a120a;transform:scaleX(0.9650);-webkit-text-stroke:0.1px #0a120a"><i class="o">1</i><i class="o">1</i>8</div>
<div class="t" style="left:54.57px;top:171.08px;font-size:18.80px;color:#0a120a;transform:scaleX(0.9650);-webkit-text-stroke:0.1px #0a120a"><i class="o">1</i><i class="o">1</i>9</div>
<div class="t" style="left:98.57px;top:171.08px;font-size:18.80px;color:#0a120a;transform:scaleX(0.9650);-webkit-text-stroke:0.1px #0a120a"><i class="o">1</i><i class="o">1</i>9</div>
<div class="t" style="left:143.57px;top:171.08px;font-size:18.80px;color:#0a120a;transform:scaleX(0.9650);-webkit-text-stroke:0.1px #0a120a"><i class="o">1</i><i class="o">1</i>9</div>
<div class="t" style="left:187.40px;top:171.08px;font-size:18.80px;color:#0a120a;transform:scaleX(0.9650);-webkit-text-stroke:0.1px #0a120a"><i class="o">1</i><i class="o">1</i>4</div>
<div class="t" style="left:232.58px;top:171.08px;font-size:18.80px;color:#0a120a;transform:scaleX(0.9650);-webkit-text-stroke:0.1px #0a120a"><i class="o">1</i><i class="o">1</i><i class="o">1</i></div>
<div class="t" style="left:276.52px;top:171.08px;font-size:18.80px;color:#0a120a;transform:scaleX(0.9650);-webkit-text-stroke:0.1px #0a120a"><i class="o">1</i><i class="o">1</i>5</div>
<div class="t" style="left:321.54px;top:171.08px;font-size:18.80px;color:#0a120a;transform:scaleX(0.9650);-webkit-text-stroke:0.1px #0a120a"><i class="o">1</i><i class="o">1</i>6</div>
<div class="t" style="left:365.58px;top:171.08px;font-size:18.80px;color:#0a120a;transform:scaleX(0.9650);-webkit-text-stroke:0.1px #0a120a"><i class="o">1</i>2<i class="o">1</i></div>
<div class="t" style="left:410.54px;top:171.08px;font-size:18.80px;color:#0a120a;transform:scaleX(0.9650);-webkit-text-stroke:0.1px #0a120a"><i class="o">1</i>23</div>
<div class="t" style="left:454.40px;top:171.08px;font-size:18.80px;color:#0a120a;transform:scaleX(0.9650);-webkit-text-stroke:0.1px #0a120a"><i class="o">1</i>24</div>
<div class="t" style="left:499.54px;top:171.08px;font-size:18.80px;color:#0a120a;transform:scaleX(0.9650);-webkit-text-stroke:0.1px #0a120a"><i class="o">1</i>23</div>
<div class="t" style="left:543.59px;top:171.08px;font-size:18.80px;color:#0a120a;transform:scaleX(0.9650);-webkit-text-stroke:0.1px #0a120a"><i class="o">1</i>22</div>
<div class="t" style="left:587.49px;top:171.08px;font-size:18.80px;color:#0a120a;transform:scaleX(0.9650);-webkit-text-stroke:0.1px #0a120a"><i class="o">1</i>20</div>
<div class="t" style="left:632.54px;top:171.08px;font-size:18.80px;color:#0a120a;transform:scaleX(0.9650);-webkit-text-stroke:0.1px #0a120a"><i class="o">1</i><i class="o">1</i>6</div>
<div class="t" style="left:676.59px;top:171.08px;font-size:18.80px;color:#0a120a;transform:scaleX(0.9650);-webkit-text-stroke:0.1px #0a120a"><i class="o">1</i><i class="o">1</i>2</div>
<div class="t" style="left:721.54px;top:171.08px;font-size:18.80px;color:#0a120a;transform:scaleX(0.9650);-webkit-text-stroke:0.1px #0a120a"><i class="o">1</i><i class="o">1</i>6</div>
<div class="t" style="left:54.57px;top:207.08px;font-size:18.80px;color:#0a120a;transform:scaleX(0.9650);-webkit-text-stroke:0.1px #0a120a"><i class="o">1</i><i class="o">1</i>9</div>
<div class="t" style="left:98.57px;top:207.08px;font-size:18.80px;color:#0a120a;transform:scaleX(0.9650);-webkit-text-stroke:0.1px #0a120a"><i class="o">1</i><i class="o">1</i>9</div>
<div class="t" style="left:143.57px;top:207.08px;font-size:18.80px;color:#0a120a;transform:scaleX(0.9650);-webkit-text-stroke:0.1px #0a120a"><i class="o">1</i><i class="o">1</i>9</div>
<div class="t" style="left:187.40px;top:207.08px;font-size:18.80px;color:#0a120a;transform:scaleX(0.9650);-webkit-text-stroke:0.1px #0a120a"><i class="o">1</i><i class="o">1</i>4</div>
<div class="t" style="left:232.58px;top:207.08px;font-size:18.80px;color:#0a120a;transform:scaleX(0.9650);-webkit-text-stroke:0.1px #0a120a"><i class="o">1</i><i class="o">1</i><i class="o">1</i></div>
<div class="t" style="left:276.40px;top:207.08px;font-size:18.80px;color:#0a120a;transform:scaleX(0.9650);-webkit-text-stroke:0.1px #0a120a"><i class="o">1</i><i class="o">1</i>4</div>
<div class="t" style="left:321.54px;top:207.08px;font-size:18.80px;color:#0a120a;transform:scaleX(0.9650);-webkit-text-stroke:0.1px #0a120a"><i class="o">1</i><i class="o">1</i>6</div>
<div class="t" style="left:365.49px;top:207.08px;font-size:18.80px;color:#0a120a;transform:scaleX(0.9650);-webkit-text-stroke:0.1px #0a120a"><i class="o">1</i>20</div>
<div class="t" style="left:410.54px;top:207.08px;font-size:18.80px;color:#0a120a;transform:scaleX(0.9650);-webkit-text-stroke:0.1px #0a120a"><i class="o">1</i>23</div>
<div class="t" style="left:454.40px;top:207.08px;font-size:18.80px;color:#0a120a;transform:scaleX(0.9650);-webkit-text-stroke:0.1px #0a120a"><i class="o">1</i>24</div>
<div class="t" style="left:499.52px;top:207.08px;font-size:18.80px;color:#0a120a;transform:scaleX(0.9650);-webkit-text-stroke:0.1px #0a120a"><i class="o">1</i>25</div>
<div class="t" style="left:543.40px;top:207.08px;font-size:18.80px;color:#0a120a;transform:scaleX(0.9650);-webkit-text-stroke:0.1px #0a120a"><i class="o">1</i>24</div>
<div class="t" style="left:587.57px;top:207.08px;font-size:18.80px;color:#0a120a;transform:scaleX(0.9650);-webkit-text-stroke:0.1px #0a120a"><i class="o">1</i><i class="o">1</i>9</div>
<div class="t" style="left:632.54px;top:207.08px;font-size:18.80px;color:#0a120a;transform:scaleX(0.9650);-webkit-text-stroke:0.1px #0a120a"><i class="o">1</i><i class="o">1</i>6</div>
<div class="t" style="left:676.54px;top:207.08px;font-size:18.80px;color:#0a120a;transform:scaleX(0.9650);-webkit-text-stroke:0.1px #0a120a"><i class="o">1</i><i class="o">1</i>3</div>
<div class="t" style="left:721.52px;top:207.08px;font-size:18.80px;color:#0a120a;transform:scaleX(0.9650);-webkit-text-stroke:0.1px #0a120a"><i class="o">1</i><i class="o">1</i>5</div>
<div class="t" style="left:54.52px;top:242.08px;font-size:18.80px;color:#0a120a;transform:scaleX(0.9650);-webkit-text-stroke:0.1px #0a120a"><i class="o">1</i><i class="o">1</i>5</div>
<div class="t" style="left:98.52px;top:242.08px;font-size:18.80px;color:#0a120a;transform:scaleX(0.9650);-webkit-text-stroke:0.1px #0a120a"><i class="o">1</i><i class="o">1</i>5</div>
<div class="t" style="left:143.52px;top:242.08px;font-size:18.80px;color:#0a120a;transform:scaleX(0.9650);-webkit-text-stroke:0.1px #0a120a"><i class="o">1</i><i class="o">1</i>5</div>
<div class="t" style="left:187.58px;top:242.08px;font-size:18.80px;color:#0a120a;transform:scaleX(0.9650);-webkit-text-stroke:0.1px #0a120a"><i class="o">1</i><i class="o">1</i><i class="o">1</i></div>
<div class="t" style="left:232.49px;top:242.08px;font-size:18.80px;color:#0a120a;transform:scaleX(0.9650);-webkit-text-stroke:0.1px #0a120a"><i class="o">1</i><i class="o">1</i>0</div>
<div class="t" style="left:276.54px;top:242.08px;font-size:18.80px;color:#0a120a;transform:scaleX(0.9650);-webkit-text-stroke:0.1px #0a120a"><i class="o">1</i><i class="o">1</i>3</div>
<div class="t" style="left:321.54px;top:242.08px;font-size:18.80px;color:#0a120a;transform:scaleX(0.9650);-webkit-text-stroke:0.1px #0a120a"><i class="o">1</i><i class="o">1</i>6</div>
<div class="t" style="left:365.53px;top:242.08px;font-size:18.80px;color:#0a120a;transform:scaleX(0.9650);-webkit-text-stroke:0.1px #0a120a"><i class="o">1</i><i class="o">1</i>8</div>
<div class="t" style="left:410.57px;top:242.08px;font-size:18.80px;color:#0a120a;transform:scaleX(0.9650);-webkit-text-stroke:0.1px #0a120a"><i class="o">1</i><i class="o">1</i>9</div>
<div class="t" style="left:454.49px;top:242.08px;font-size:18.80px;color:#0a120a;transform:scaleX(0.9650);-webkit-text-stroke:0.1px #0a120a"><i class="o">1</i>20</div>
<div class="t" style="left:499.58px;top:242.08px;font-size:18.80px;color:#0a120a;transform:scaleX(0.9650);-webkit-text-stroke:0.1px #0a120a"><i class="o">1</i>2<i class="o">1</i></div>
<div class="t" style="left:543.53px;top:242.08px;font-size:18.80px;color:#0a120a;transform:scaleX(0.9650);-webkit-text-stroke:0.1px #0a120a"><i class="o">1</i><i class="o">1</i>8</div>
<div class="t" style="left:587.52px;top:242.08px;font-size:18.80px;color:#0a120a;transform:scaleX(0.9650);-webkit-text-stroke:0.1px #0a120a"><i class="o">1</i><i class="o">1</i>5</div>
<div class="t" style="left:632.49px;top:242.08px;font-size:18.80px;color:#0a120a;transform:scaleX(0.9650);-webkit-text-stroke:0.1px #0a120a"><i class="o">1</i><i class="o">1</i>0</div>
<div class="t" style="left:676.54px;top:242.08px;font-size:18.80px;color:#0a120a;transform:scaleX(0.9650);-webkit-text-stroke:0.1px #0a120a"><i class="o">1</i>06</div>
<div class="t" style="left:721.53px;top:242.08px;font-size:18.80px;color:#0a120a;transform:scaleX(0.9650);-webkit-text-stroke:0.1px #0a120a"><i class="o">1</i>08</div>
<div class="t" style="left:54.57px;top:278.08px;font-size:18.80px;color:#0a120a;transform:scaleX(0.9650);-webkit-text-stroke:0.1px #0a120a"><i class="o">1</i>09</div>
<div class="t" style="left:98.58px;top:278.08px;font-size:18.80px;color:#0a120a;transform:scaleX(0.9650);-webkit-text-stroke:0.1px #0a120a"><i class="o">1</i><i class="o">1</i><i class="o">1</i></div>
<div class="t" style="left:143.49px;top:278.08px;font-size:18.80px;color:#0a120a;transform:scaleX(0.9650);-webkit-text-stroke:0.1px #0a120a"><i class="o">1</i><i class="o">1</i>0</div>
<div class="t" style="left:187.59px;top:278.08px;font-size:18.80px;color:#0a120a;transform:scaleX(0.9650);-webkit-text-stroke:0.1px #0a120a"><i class="o">1</i>07</div>
<div class="t" style="left:232.58px;top:278.08px;font-size:18.80px;color:#0a120a;transform:scaleX(0.9650);-webkit-text-stroke:0.1px #0a120a"><i class="o">1</i><i class="o">1</i><i class="o">1</i></div>
<div class="t" style="left:276.59px;top:278.08px;font-size:18.80px;color:#0a120a;transform:scaleX(0.9650);-webkit-text-stroke:0.1px #0a120a"><i class="o">1</i>07</div>
<div class="t" style="left:321.57px;top:278.08px;font-size:18.80px;color:#0a120a;transform:scaleX(0.9650);-webkit-text-stroke:0.1px #0a120a"><i class="o">1</i>09</div>
<div class="t" style="left:365.59px;top:278.08px;font-size:18.80px;color:#0a120a;transform:scaleX(0.9650);-webkit-text-stroke:0.1px #0a120a"><i class="o">1</i><i class="o">1</i>7</div>
<div class="t" style="left:410.59px;top:278.08px;font-size:18.80px;color:#0a120a;transform:scaleX(0.9650);-webkit-text-stroke:0.1px #0a120a"><i class="o">1</i><i class="o">1</i>7</div>
<div class="t" style="left:454.53px;top:278.08px;font-size:18.80px;color:#0a120a;transform:scaleX(0.9650);-webkit-text-stroke:0.1px #0a120a"><i class="o">1</i><i class="o">1</i>8</div>
<div class="t" style="left:499.53px;top:278.08px;font-size:18.80px;color:#0a120a;transform:scaleX(0.9650);-webkit-text-stroke:0.1px #0a120a"><i class="o">1</i><i class="o">1</i>8</div>
<div class="t" style="left:543.54px;top:278.08px;font-size:18.80px;color:#0a120a;transform:scaleX(0.9650);-webkit-text-stroke:0.1px #0a120a"><i class="o">1</i><i class="o">1</i>6</div>
<div class="t" style="left:587.54px;top:278.08px;font-size:18.80px;color:#0a120a;transform:scaleX(0.9650);-webkit-text-stroke:0.1px #0a120a"><i class="o">1</i><i class="o">1</i>3</div>
<div class="t" style="left:632.57px;top:278.08px;font-size:18.80px;color:#0a120a;transform:scaleX(0.9650);-webkit-text-stroke:0.1px #0a120a"><i class="o">1</i>09</div>
<div class="t" style="left:676.59px;top:278.08px;font-size:18.80px;color:#0a120a;transform:scaleX(0.9650);-webkit-text-stroke:0.1px #0a120a"><i class="o">1</i>07</div>
<div class="t" style="left:721.54px;top:278.08px;font-size:18.80px;color:#0a120a;transform:scaleX(0.9650);-webkit-text-stroke:0.1px #0a120a"><i class="o">1</i>06</div>
<div class="t" style="left:54.59px;top:313.08px;font-size:18.80px;color:#0a120a;transform:scaleX(0.9650);-webkit-text-stroke:0.1px #0a120a"><i class="o">1</i>07</div>
<div class="t" style="left:98.59px;top:313.08px;font-size:18.80px;color:#0a120a;transform:scaleX(0.9650);-webkit-text-stroke:0.1px #0a120a"><i class="o">1</i>07</div>
<div class="t" style="left:143.54px;top:313.08px;font-size:18.80px;color:#0a120a;transform:scaleX(0.9650);-webkit-text-stroke:0.1px #0a120a"><i class="o">1</i>06</div>
<div class="t" style="left:187.54px;top:313.08px;font-size:18.80px;color:#0a120a;transform:scaleX(0.9650);-webkit-text-stroke:0.1px #0a120a"><i class="o">1</i>06</div>
<div class="t" style="left:232.59px;top:313.08px;font-size:18.80px;color:#0a120a;transform:scaleX(0.9650);-webkit-text-stroke:0.1px #0a120a"><i class="o">1</i>07</div>
<div class="t" style="left:276.59px;top:313.08px;font-size:18.80px;color:#0a120a;transform:scaleX(0.9650);-webkit-text-stroke:0.1px #0a120a"><i class="o">1</i>07</div>
<div class="t" style="left:321.59px;top:313.08px;font-size:18.80px;color:#0a120a;transform:scaleX(0.9650);-webkit-text-stroke:0.1px #0a120a"><i class="o">1</i>07</div>
<div class="t" style="left:365.40px;top:313.08px;font-size:18.80px;color:#0a120a;transform:scaleX(0.9650);-webkit-text-stroke:0.1px #0a120a"><i class="o">1</i><i class="o">1</i>4</div>
<div class="t" style="left:410.54px;top:313.08px;font-size:18.80px;color:#0a120a;transform:scaleX(0.9650);-webkit-text-stroke:0.1px #0a120a"><i class="o">1</i><i class="o">1</i>3</div>
<div class="t" style="left:454.54px;top:313.08px;font-size:18.80px;color:#0a120a;transform:scaleX(0.9650);-webkit-text-stroke:0.1px #0a120a"><i class="o">1</i><i class="o">1</i>3</div>
<div class="t" style="left:499.40px;top:313.08px;font-size:18.80px;color:#0a120a;transform:scaleX(0.9650);-webkit-text-stroke:0.1px #0a120a"><i class="o">1</i><i class="o">1</i>4</div>
<div class="t" style="left:543.40px;top:313.08px;font-size:18.80px;color:#0a120a;transform:scaleX(0.9650);-webkit-text-stroke:0.1px #0a120a"><i class="o">1</i><i class="o">1</i>4</div>
<div class="t" style="left:587.58px;top:313.08px;font-size:18.80px;color:#0a120a;transform:scaleX(0.9650);-webkit-text-stroke:0.1px #0a120a"><i class="o">1</i><i class="o">1</i><i class="o">1</i></div>
<div class="t" style="left:632.57px;top:313.08px;font-size:18.80px;color:#0a120a;transform:scaleX(0.9650);-webkit-text-stroke:0.1px #0a120a"><i class="o">1</i>09</div>
<div class="t" style="left:676.58px;top:313.08px;font-size:18.80px;color:#0a120a;transform:scaleX(0.9650);-webkit-text-stroke:0.1px #0a120a"><i class="o">1</i><i class="o">1</i><i class="o">1</i></div>
<div class="t" style="left:721.49px;top:313.08px;font-size:18.80px;color:#0a120a;transform:scaleX(0.9650);-webkit-text-stroke:0.1px #0a120a"><i class="o">1</i><i class="o">1</i>0</div>
<div class="t" style="left:61.93px;top:349.08px;font-size:18.80px;color:#0a120a;transform:scaleX(0.9650);-webkit-text-stroke:0.1px #0a120a">96</div>
<div class="t" style="left:105.99px;top:349.08px;font-size:18.80px;color:#0a120a;transform:scaleX(0.9650);-webkit-text-stroke:0.1px #0a120a">97</div>
<div class="t" style="left:150.96px;top:349.08px;font-size:18.80px;color:#0a120a;transform:scaleX(0.9650);-webkit-text-stroke:0.1px #0a120a">99</div>
<div class="t" style="left:187.58px;top:349.08px;font-size:18.80px;color:#0a120a;transform:scaleX(0.9650);-webkit-text-stroke:0.1px #0a120a"><i class="o">1</i>0<i class="o">1</i></div>
<div class="t" style="left:232.59px;top:349.08px;font-size:18.80px;color:#0a120a;transform:scaleX(0.9650);-webkit-text-stroke:0.1px #0a120a"><i class="o">1</i>02</div>
<div class="t" style="left:283.99px;top:349.08px;font-size:18.80px;color:#0a120a;transform:scaleX(0.9650);-webkit-text-stroke:0.1px #0a120a">97</div>
<div class="t" style="left:321.49px;top:349.08px;font-size:18.80px;color:#0a120a;transform:scaleX(0.9650);-webkit-text-stroke:0.1px #0a120a"><i class="o">1</i>00</div>
<div class="t" style="left:365.57px;top:349.08px;font-size:18.80px;color:#0a120a;transform:scaleX(0.9650);-webkit-text-stroke:0.1px #0a120a"><i class="o">1</i>09</div>
<div class="t" style="left:410.53px;top:349.08px;font-size:18.80px;color:#0a120a;transform:scaleX(0.9650);-webkit-text-stroke:0.1px #0a120a"><i class="o">1</i>08</div>
<div class="t" style="left:454.49px;top:349.08px;font-size:18.80px;color:#0a120a;transform:scaleX(0.9650);-webkit-text-stroke:0.1px #0a120a"><i class="o">1</i><i class="o">1</i>0</div>
<div class="t" style="left:499.58px;top:349.08px;font-size:18.80px;color:#0a120a;transform:scaleX(0.9650);-webkit-text-stroke:0.1px #0a120a"><i class="o">1</i><i class="o">1</i><i class="o">1</i></div>
<div class="t" style="left:543.49px;top:349.08px;font-size:18.80px;color:#0a120a;transform:scaleX(0.9650);-webkit-text-stroke:0.1px #0a120a"><i class="o">1</i><i class="o">1</i>0</div>
<div class="t" style="left:587.57px;top:349.08px;font-size:18.80px;color:#0a120a;transform:scaleX(0.9650);-webkit-text-stroke:0.1px #0a120a"><i class="o">1</i>09</div>
<div class="t" style="left:632.53px;top:349.08px;font-size:18.80px;color:#0a120a;transform:scaleX(0.9650);-webkit-text-stroke:0.1px #0a120a"><i class="o">1</i>08</div>
<div class="t" style="left:676.59px;top:349.08px;font-size:18.80px;color:#0a120a;transform:scaleX(0.9650);-webkit-text-stroke:0.1px #0a120a"><i class="o">1</i>07</div>
<div class="t" style="left:721.54px;top:349.08px;font-size:18.80px;color:#0a120a;transform:scaleX(0.9650);-webkit-text-stroke:0.1px #0a120a"><i class="o">1</i>06</div>
<div class="t" style="left:61.83px;top:384.08px;font-size:18.80px;color:#0a120a;transform:scaleX(0.9650);-webkit-text-stroke:0.1px #0a120a">84</div>
<div class="t" style="left:105.96px;top:384.08px;font-size:18.80px;color:#0a120a;transform:scaleX(0.9650);-webkit-text-stroke:0.1px #0a120a">86</div>
<div class="t" style="left:150.99px;top:384.08px;font-size:18.80px;color:#0a120a;transform:scaleX(0.9650);-webkit-text-stroke:0.1px #0a120a">92</div>
<div class="t" style="left:194.93px;top:384.08px;font-size:18.80px;color:#0a120a;transform:scaleX(0.9650);-webkit-text-stroke:0.1px #0a120a">96</div>
<div class="t" style="left:239.92px;top:384.08px;font-size:18.80px;color:#0a120a;transform:scaleX(0.9650);-webkit-text-stroke:0.1px #0a120a">98</div>
<div class="t" style="left:276.54px;top:384.08px;font-size:18.80px;color:#0a120a;transform:scaleX(0.9650);-webkit-text-stroke:0.1px #0a120a"><i class="o">1</i>03</div>
<div class="t" style="left:321.54px;top:384.08px;font-size:18.80px;color:#0a120a;transform:scaleX(0.9650);-webkit-text-stroke:0.1px #0a120a"><i class="o">1</i>03</div>
<div class="t" style="left:365.40px;top:384.08px;font-size:18.80px;color:#0a120a;transform:scaleX(0.9650);-webkit-text-stroke:0.1px #0a120a"><i class="o">1</i>04</div>
<div class="t" style="left:410.54px;top:384.08px;font-size:18.80px;color:#0a120a;transform:scaleX(0.9650);-webkit-text-stroke:0.1px #0a120a"><i class="o">1</i>03</div>
<div class="t" style="left:454.52px;top:384.08px;font-size:18.80px;color:#0a120a;transform:scaleX(0.9650);-webkit-text-stroke:0.1px #0a120a"><i class="o">1</i>05</div>
<div class="t" style="left:499.57px;top:384.08px;font-size:18.80px;color:#0a120a;transform:scaleX(0.9650);-webkit-text-stroke:0.1px #0a120a"><i class="o">1</i>09</div>
<div class="t" style="left:543.53px;top:384.08px;font-size:18.80px;color:#0a120a;transform:scaleX(0.9650);-webkit-text-stroke:0.1px #0a120a"><i class="o">1</i>08</div>
<div class="t" style="left:587.59px;top:384.08px;font-size:18.80px;color:#0a120a;transform:scaleX(0.9650);-webkit-text-stroke:0.1px #0a120a"><i class="o">1</i>07</div>
<div class="t" style="left:632.54px;top:384.08px;font-size:18.80px;color:#0a120a;transform:scaleX(0.9650);-webkit-text-stroke:0.1px #0a120a"><i class="o">1</i>06</div>
<div class="t" style="left:676.52px;top:384.08px;font-size:18.80px;color:#0a120a;transform:scaleX(0.9650);-webkit-text-stroke:0.1px #0a120a"><i class="o">1</i>05</div>
<div class="t" style="left:721.40px;top:384.08px;font-size:18.80px;color:#0a120a;transform:scaleX(0.9650);-webkit-text-stroke:0.1px #0a120a"><i class="o">1</i>04</div>
<div class="t" style="left:61.95px;top:419.08px;font-size:18.80px;color:#0a120a;transform:scaleX(0.9650);-webkit-text-stroke:0.1px #0a120a">77</div>
<div class="t" style="left:105.89px;top:419.08px;font-size:18.80px;color:#0a120a;transform:scaleX(0.9650);-webkit-text-stroke:0.1px #0a120a">76</div>
<div class="t" style="left:150.83px;top:419.08px;font-size:18.80px;color:#0a120a;transform:scaleX(0.9650);-webkit-text-stroke:0.1px #0a120a">84</div>
<div class="t" style="left:194.96px;top:419.08px;font-size:18.80px;color:#0a120a;transform:scaleX(0.9650);-webkit-text-stroke:0.1px #0a120a">83</div>
<div class="t" style="left:239.93px;top:419.08px;font-size:18.80px;color:#0a120a;transform:scaleX(0.9650);-webkit-text-stroke:0.1px #0a120a">93</div>
<div class="t" style="left:276.54px;top:419.08px;font-size:18.80px;color:#0a120a;transform:scaleX(0.9650);-webkit-text-stroke:0.1px #0a120a"><i class="o">1</i>03</div>
<div class="t" style="left:328.92px;top:419.08px;font-size:18.80px;color:#0a120a;transform:scaleX(0.9650);-webkit-text-stroke:0.1px #0a120a">98</div>
<div class="t" style="left:372.92px;top:419.08px;font-size:18.80px;color:#0a120a;transform:scaleX(0.9650);-webkit-text-stroke:0.1px #0a120a">98</div>
<div class="t" style="left:410.58px;top:419.08px;font-size:18.80px;color:#0a120a;transform:scaleX(0.9650);-webkit-text-stroke:0.1px #0a120a"><i class="o">1</i>0<i class="o">1</i></div>
<div class="t" style="left:454.40px;top:419.08px;font-size:18.80px;color:#0a120a;transform:scaleX(0.9650);-webkit-text-stroke:0.1px #0a120a"><i class="o">1</i>04</div>
<div class="t" style="left:499.53px;top:419.08px;font-size:18.80px;color:#0a120a;transform:scaleX(0.9650);-webkit-text-stroke:0.1px #0a120a"><i class="o">1</i>08</div>
<div class="t" style="left:543.59px;top:419.08px;font-size:18.80px;color:#0a120a;transform:scaleX(0.9650);-webkit-text-stroke:0.1px #0a120a"><i class="o">1</i>07</div>
<div class="t" style="left:587.54px;top:419.08px;font-size:18.80px;color:#0a120a;transform:scaleX(0.9650);-webkit-text-stroke:0.1px #0a120a"><i class="o">1</i>06</div>
<div class="t" style="left:632.52px;top:419.08px;font-size:18.80px;color:#0a120a;transform:scaleX(0.9650);-webkit-text-stroke:0.1px #0a120a"><i class="o">1</i>05</div>
<div class="t" style="left:676.40px;top:419.08px;font-size:18.80px;color:#0a120a;transform:scaleX(0.9650);-webkit-text-stroke:0.1px #0a120a"><i class="o">1</i>04</div>
<div class="t" style="left:721.54px;top:419.08px;font-size:18.80px;color:#0a120a;transform:scaleX(0.9650);-webkit-text-stroke:0.1px #0a120a"><i class="o">1</i>03</div>
<div class="t" style="left:61.88px;top:455.08px;font-size:18.80px;color:#0a120a;transform:scaleX(0.9650);-webkit-text-stroke:0.1px #0a120a">65</div>
<div class="t" style="left:105.89px;top:455.08px;font-size:18.80px;color:#0a120a;transform:scaleX(0.9650);-webkit-text-stroke:0.1px #0a120a">68</div>
<div class="t" style="left:150.89px;top:455.08px;font-size:18.80px;color:#0a120a;transform:scaleX(0.9650);-webkit-text-stroke:0.1px #0a120a">76</div>
<div class="t" style="left:195.00px;top:455.08px;font-size:18.80px;color:#0a120a;transform:scaleX(0.9650);-webkit-text-stroke:0.1px #0a120a">8<i class="o">1</i></div>
<div class="t" style="left:239.88px;top:455.08px;font-size:18.80px;color:#0a120a;transform:scaleX(0.9650);-webkit-text-stroke:0.1px #0a120a">90</div>
<div class="t" style="left:283.80px;top:455.08px;font-size:18.80px;color:#0a120a;transform:scaleX(0.9650);-webkit-text-stroke:0.1px #0a120a">94</div>
<div class="t" style="left:328.93px;top:455.08px;font-size:18.80px;color:#0a120a;transform:scaleX(0.9650);-webkit-text-stroke:0.1px #0a120a">96</div>
<div class="t" style="left:372.99px;top:455.08px;font-size:18.80px;color:#0a120a;transform:scaleX(0.9650);-webkit-text-stroke:0.1px #0a120a">97</div>
<div class="t" style="left:417.96px;top:455.08px;font-size:18.80px;color:#0a120a;transform:scaleX(0.9650);-webkit-text-stroke:0.1px #0a120a">99</div>
<div class="t" style="left:454.58px;top:455.08px;font-size:18.80px;color:#0a120a;transform:scaleX(0.9650);-webkit-text-stroke:0.1px #0a120a"><i class="o">1</i>0<i class="o">1</i></div>
<div class="t" style="left:499.52px;top:455.08px;font-size:18.80px;color:#0a120a;transform:scaleX(0.9650);-webkit-text-stroke:0.1px #0a120a"><i class="o">1</i>05</div>
<div class="t" style="left:543.40px;top:455.08px;font-size:18.80px;color:#0a120a;transform:scaleX(0.9650);-webkit-text-stroke:0.1px #0a120a"><i class="o">1</i>04</div>
<div class="t" style="left:587.54px;top:455.08px;font-size:18.80px;color:#0a120a;transform:scaleX(0.9650);-webkit-text-stroke:0.1px #0a120a"><i class="o">1</i>03</div>
<div class="t" style="left:632.59px;top:455.08px;font-size:18.80px;color:#0a120a;transform:scaleX(0.9650);-webkit-text-stroke:0.1px #0a120a"><i class="o">1</i>02</div>
<div class="t" style="left:676.58px;top:455.08px;font-size:18.80px;color:#0a120a;transform:scaleX(0.9650);-webkit-text-stroke:0.1px #0a120a"><i class="o">1</i>0<i class="o">1</i></div>
<div class="t" style="left:721.49px;top:455.08px;font-size:18.80px;color:#0a120a;transform:scaleX(0.9650);-webkit-text-stroke:0.1px #0a120a"><i class="o">1</i>00</div>
<div class="t" style="left:61.95px;top:490.08px;font-size:18.80px;color:#0a120a;transform:scaleX(0.9650);-webkit-text-stroke:0.1px #0a120a">67</div>
<div class="t" style="left:105.95px;top:490.08px;font-size:18.80px;color:#0a120a;transform:scaleX(0.9650);-webkit-text-stroke:0.1px #0a120a">67</div>
<div class="t" style="left:150.89px;top:490.08px;font-size:18.80px;color:#0a120a;transform:scaleX(0.9650);-webkit-text-stroke:0.1px #0a120a">73</div>
<div class="t" style="left:194.87px;top:490.08px;font-size:18.80px;color:#0a120a;transform:scaleX(0.9650);-webkit-text-stroke:0.1px #0a120a">75</div>
<div class="t" style="left:239.96px;top:490.08px;font-size:18.80px;color:#0a120a;transform:scaleX(0.9650);-webkit-text-stroke:0.1px #0a120a">88</div>
<div class="t" style="left:283.80px;top:490.08px;font-size:18.80px;color:#0a120a;transform:scaleX(0.9650);-webkit-text-stroke:0.1px #0a120a">94</div>
<div class="t" style="left:328.93px;top:490.08px;font-size:18.80px;color:#0a120a;transform:scaleX(0.9650);-webkit-text-stroke:0.1px #0a120a">93</div>
<div class="t" style="left:372.93px;top:490.08px;font-size:18.80px;color:#0a120a;transform:scaleX(0.9650);-webkit-text-stroke:0.1px #0a120a">93</div>
<div class="t" style="left:417.91px;top:490.08px;font-size:18.80px;color:#0a120a;transform:scaleX(0.9650);-webkit-text-stroke:0.1px #0a120a">95</div>
<div class="t" style="left:461.99px;top:490.08px;font-size:18.80px;color:#0a120a;transform:scaleX(0.9650);-webkit-text-stroke:0.1px #0a120a">97</div>
<div class="t" style="left:499.58px;top:490.08px;font-size:18.80px;color:#0a120a;transform:scaleX(0.9650);-webkit-text-stroke:0.1px #0a120a"><i class="o">1</i>0<i class="o">1</i></div>
<div class="t" style="left:543.49px;top:490.08px;font-size:18.80px;color:#0a120a;transform:scaleX(0.9650);-webkit-text-stroke:0.1px #0a120a"><i class="o">1</i>00</div>
<div class="t" style="left:594.96px;top:490.08px;font-size:18.80px;color:#0a120a;transform:scaleX(0.9650);-webkit-text-stroke:0.1px #0a120a">99</div>
<div class="t" style="left:639.92px;top:490.08px;font-size:18.80px;color:#0a120a;transform:scaleX(0.9650);-webkit-text-stroke:0.1px #0a120a">98</div>
<div class="t" style="left:683.99px;top:490.08px;font-size:18.80px;color:#0a120a;transform:scaleX(0.9650);-webkit-text-stroke:0.1px #0a120a">97</div>
<div class="t" style="left:728.93px;top:490.08px;font-size:18.80px;color:#0a120a;transform:scaleX(0.9650);-webkit-text-stroke:0.1px #0a120a">96</div>
<div class="t" style="left:61.92px;top:526.08px;font-size:18.80px;color:#0a120a;transform:scaleX(0.9650);-webkit-text-stroke:0.1px #0a120a">69</div>
<div class="t" style="left:105.92px;top:526.08px;font-size:18.80px;color:#0a120a;transform:scaleX(0.9650);-webkit-text-stroke:0.1px #0a120a">69</div>
<div class="t" style="left:150.89px;top:526.08px;font-size:18.80px;color:#0a120a;transform:scaleX(0.9650);-webkit-text-stroke:0.1px #0a120a">76</div>
<div class="t" style="left:194.92px;top:526.08px;font-size:18.80px;color:#0a120a;transform:scaleX(0.9650);-webkit-text-stroke:0.1px #0a120a">79</div>
<div class="t" style="left:239.96px;top:526.08px;font-size:18.80px;color:#0a120a;transform:scaleX(0.9650);-webkit-text-stroke:0.1px #0a120a">86</div>
<div class="t" style="left:284.02px;top:526.08px;font-size:18.80px;color:#0a120a;transform:scaleX(0.9650);-webkit-text-stroke:0.1px #0a120a">87</div>
<div class="t" style="left:328.97px;top:526.08px;font-size:18.80px;color:#0a120a;transform:scaleX(0.9650);-webkit-text-stroke:0.1px #0a120a">9<i class="o">1</i></div>
<div class="t" style="left:372.93px;top:526.08px;font-size:18.80px;color:#0a120a;transform:scaleX(0.9650);-webkit-text-stroke:0.1px #0a120a">93</div>
<div class="t" style="left:417.96px;top:526.08px;font-size:18.80px;color:#0a120a;transform:scaleX(0.9650);-webkit-text-stroke:0.1px #0a120a">88</div>
<div class="t" style="left:461.88px;top:526.08px;font-size:18.80px;color:#0a120a;transform:scaleX(0.9650);-webkit-text-stroke:0.1px #0a120a">90</div>
<div class="t" style="left:506.80px;top:526.08px;font-size:18.80px;color:#0a120a;transform:scaleX(0.9650);-webkit-text-stroke:0.1px #0a120a">94</div>
<div class="t" style="left:550.93px;top:526.08px;font-size:18.80px;color:#0a120a;transform:scaleX(0.9650);-webkit-text-stroke:0.1px #0a120a">93</div>
<div class="t" style="left:594.99px;top:526.08px;font-size:18.80px;color:#0a120a;transform:scaleX(0.9650);-webkit-text-stroke:0.1px #0a120a">92</div>
<div class="t" style="left:639.97px;top:526.08px;font-size:18.80px;color:#0a120a;transform:scaleX(0.9650);-webkit-text-stroke:0.1px #0a120a">9<i class="o">1</i></div>
<div class="t" style="left:683.88px;top:526.08px;font-size:18.80px;color:#0a120a;transform:scaleX(0.9650);-webkit-text-stroke:0.1px #0a120a">90</div>
<div class="t" style="left:728.99px;top:526.08px;font-size:18.80px;color:#0a120a;transform:scaleX(0.9650);-webkit-text-stroke:0.1px #0a120a">89</div>
<div style="left:3.5px;top:551.2px;width:757.94px;height:4.8px;background:#f2f2f2"></div>
<div style="left:759px;top:0;width:2.2px;height:556px;background:#e8e8e8"></div>
<div style="left:760.6px;top:0;width:1px;height:556px;background:#a0a0a0"></div>
<div style="left:761.4px;top:0;width:3px;height:556px;background:#262626"></div>
<div style="left:764.4px;top:0;width:3.6px;height:556px;background:#f8f8f8"></div>
<div style="left:757.8px;top:21px;width:1.2px;height:34px;background:#a8a8a8"></div>
<div style="left:768px;top:0;width:132px;height:20px;background:#c8d4e1"></div>
<div class="t" style="left:772.16px;top:3.48px;font-size:13.60px;color:#0c0c18;font-weight:bold;transform:scaleX(0.9224);-webkit-text-stroke:0.25px #0c0c18">RPM/MAP Fuel VE</div>
<div style="left:768px;top:20px;width:132px;height:533px;background:#000"></div>
<div style="left:765px;top:553px;width:135px;height:3.2px;background:#f0f0f0"></div>
<div class="t" style="left:779.6px;top:27.30px;font-size:15px;font-weight:bold;letter-spacing:0.05px;color:#e02424">selected [ <span style="color:#3a8ae6">500.00</span></div>
<div class="t" style="left:779.2px;top:43.90px;font-size:15px;font-weight:bold;letter-spacing:0.05px;color:#22dd22">marked [ <span style="color:#3a8ae6">6<i class="ob">1</i>42.00</span></div>
<svg style="position:absolute;left:768px;top:20px" width="132" height="531" viewBox="768 20 132 531">
<g stroke="#e0e0e0" stroke-width="1.2" fill="none">
<polyline points="900,228.8 873.8,233.5 839.6,240.3 896.5,403 900,406"/>
<line x1="839.6" y1="240.3" x2="900" y2="283"/>
<line x1="873.8" y1="233.5" x2="900" y2="251"/>
<line x1="875" y1="264.8" x2="900" y2="258.7"/>
<line x1="893" y1="277" x2="900" y2="275.8"/>
</g></svg>
<div style="left:1.3px;top:568.3px;width:920px;height:104.8px;border:2.2px solid #f0c010;background:#03031a"></div>
<div class="t" style="left:14.16px;top:577.93px;font-size:23.00px;color:#f8c818;transform:scaleX(0.9762)">Lambda</div>
<div class="t" style="left:104.38px;top:577.93px;font-size:23.00px;color:#f8c818;transform:scaleX(1.0000);transform:scaleX(0.976)">Target</div>
<div class="t" style="left:14.16px;top:609.13px;font-size:23.00px;color:#f8c818;transform:scaleX(0.9762)">Lambda</div>
<div class="t" style="left:14.50px;top:641.93px;font-size:23.00px;color:#f8c818;transform:scaleX(0.9706)">lambda-EGO</div>
<div style="left:166px;top:572.5px;width:23px;height:15.5px;background:#fcc808"></div>
<div style="left:100.1px;top:587.8px;width:154.9px;height:14.2px;background:#fcc808"></div>
<div style="left:152.2px;top:604.6px;width:154.8px;height:29.4px;background:#fcc808"></div>
<div style="left:152.2px;top:636.6px;width:154.8px;height:29.4px;background:#fcc808"></div>
<div class="g" style="left:3.2px;top:675.0px;width:187.6px;height:108.6px"></div>
<div style="left:18.00px;top:680.00px;width:62.00px;height:25.30px;background:#ff0000"></div>
<div style="left:80.00px;top:680.00px;width:16.00px;height:25.30px;background:#fcc808"></div>
<div style="left:96.00px;top:680.00px;width:2.40px;height:25.30px;background:#00f000"></div>
<div style="left:98.40px;top:680.00px;width:77.60px;height:25.30px;background:#6a6a6a"></div>
<div class="t" style="left:16.77px;top:681.76px;font-size:23.20px;color:#ffffff;transform:scaleX(0.9628)">EGO Correction</div>
<div class="t" style="left:39.26px;top:703.21px;font-size:87.50px;color:#fcc808;transform:scaleX(0.9437);-webkit-text-stroke:0.90px #fcc808"><i class="O">1</i>00</div>
<div class="t" style="left:173.78px;top:762.80px;font-size:15.00px;color:#fcc808;transform:scaleX(0.9700);-webkit-text-stroke:0.3px #fcc808">%</div>
<div class="g" style="left:192.5px;top:675.7px;width:234.5px;height:107.5px"></div>
<div style="left:207.30px;top:679.90px;width:92.50px;height:25.50px;background:#00f000"></div>
<div style="left:299.80px;top:679.90px;width:112.40px;height:25.50px;background:#6a6a6a"></div>
<div class="t" style="left:221.68px;top:681.96px;font-size:23.20px;color:#ffffff;transform:scaleX(1.0030)">Total Enrichment</div>
<div class="t" style="left:321.38px;top:703.81px;font-size:87.50px;color:#fcc808;transform:scaleX(0.9324);-webkit-text-stroke:0.90px #fcc808">95</div>
<div class="t" style="left:409.28px;top:762.70px;font-size:15.00px;color:#fcc808;transform:scaleX(0.9781);-webkit-text-stroke:0.3px #fcc808">%</div>
<div class="g" style="left:431.1px;top:674.0px;width:249.8px;height:106.7px"></div>
<div style="left:445.90px;top:677.90px;width:4.20px;height:24.80px;background:#00f000"></div>
<div style="left:450.10px;top:677.90px;width:216.00px;height:24.80px;background:#6a6a6a"></div>
<div class="t" style="left:450.20px;top:679.96px;font-size:23.20px;color:#ffffff;transform:scaleX(1.0049)">Warmup Enrichment</div>
<div class="t" style="left:528.27px;top:700.81px;font-size:87.50px;color:#fcc808;transform:scaleX(0.9541);-webkit-text-stroke:0.90px #fcc808"><i class="O">1</i>00</div>
<div class="t" style="left:664.22px;top:760.40px;font-size:15.00px;color:#fcc808;transform:scaleX(0.8885);-webkit-text-stroke:0.3px #fcc808">%</div>
<div class="g" style="left:1.5px;top:784.0px;width:185.6px;height:108.8px"></div>
<div style="left:15.60px;top:788.40px;width:86.00px;height:25.20px;background:#00f000"></div>
<div style="left:101.60px;top:788.40px;width:72.40px;height:25.20px;background:#6a6a6a"></div>
<div class="t" style="left:44.29px;top:790.16px;font-size:23.20px;color:#ffffff;transform:scaleX(1.0036)">Exhaust <i class="o">1</i></div>
<div class="t" style="left:34.61px;top:811.31px;font-size:87.50px;color:#fcc808;transform:scaleX(0.9426);-webkit-text-stroke:0.90px #fcc808">643</div>
<div class="t" style="left:169.20px;top:872.02px;font-size:14.50px;color:#fcc808;transform:scaleX(0.9290);-webkit-text-stroke:0.3px #fcc808">°C</div>
<div class="g" style="left:193.3px;top:784.7px;width:155.4px;height:108.0px"></div>
<div style="left:207.50px;top:788.30px;width:55.50px;height:25.40px;background:#00f000"></div>
<div style="left:263.00px;top:788.30px;width:71.70px;height:25.40px;background:#6a6a6a"></div>
<div class="t" style="left:247.13px;top:790.16px;font-size:23.20px;color:#ffffff;transform:scaleX(0.9326)">MAT</div>
<div class="t" style="left:240.82px;top:812.11px;font-size:87.50px;color:#fcc808;transform:scaleX(0.9544);-webkit-text-stroke:0.90px #fcc808">35</div>
<div class="t" style="left:329.74px;top:871.72px;font-size:14.50px;color:#fcc808;transform:scaleX(0.9964);-webkit-text-stroke:0.3px #fcc808">°C</div>
<div class="g" style="left:353.9px;top:784.1px;width:155.6px;height:108.3px"></div>
<div style="left:367.90px;top:787.20px;width:10.00px;height:25.80px;background:#ff0000"></div>
<div style="left:377.90px;top:787.20px;width:64.60px;height:25.80px;background:#fcc808"></div>
<div style="left:442.50px;top:787.20px;width:3.80px;height:25.80px;background:#00f000"></div>
<div style="left:446.30px;top:787.20px;width:49.10px;height:25.80px;background:#6a6a6a"></div>
<div class="t" style="left:359.23px;top:787.43px;font-size:25.00px;color:#ffffff;transform:scaleX(0.9192)">Coolant Temp</div>
<div class="t" style="left:401.09px;top:810.11px;font-size:87.50px;color:#fcc808;transform:scaleX(0.9607);-webkit-text-stroke:0.90px #fcc808">73</div>
<div class="t" style="left:490.44px;top:871.02px;font-size:14.50px;color:#fcc808;transform:scaleX(0.9964);-webkit-text-stroke:0.3px #fcc808">°C</div>
<div class="g" style="left:511.1px;top:784.7px;width:171.6px;height:107.7px"></div>
<div style="left:525.40px;top:788.60px;width:4.70px;height:29.30px;background:#ff0000"></div>
<div style="left:530.10px;top:788.60px;width:2.80px;height:29.30px;background:#fcc808"></div>
<div style="left:532.90px;top:788.60px;width:85.10px;height:29.30px;background:#00f000"></div>
<div style="left:618.00px;top:788.60px;width:49.60px;height:29.30px;background:#6a6a6a"></div>
<div class="t" style="left:528.47px;top:789.78px;font-size:28.60px;color:#ffffff;transform:scaleX(0.9518)">Pulse width</div>
<div class="t" style="left:509.83px;top:816.77px;font-size:82.00px;color:#fcc808;transform:scaleX(0.9476);-webkit-text-stroke:0.90px #fcc808"><i class="O">1</i>6.5</div>
<div class="t" style="left:657.31px;top:872.12px;font-size:14.50px;color:#fcc808;transform:scaleX(0.9244);-webkit-text-stroke:0.3px #fcc808">mS</div>
<div class="g" style="left:691.0px;top:786.1px;width:201.7px;height:108.3px"></div>
<div style="left:705.00px;top:790.40px;width:11.80px;height:25.40px;background:#fcc808"></div>
<div style="left:716.80px;top:790.40px;width:46.00px;height:25.40px;background:#00f000"></div>
<div style="left:762.80px;top:790.40px;width:57.10px;height:25.40px;background:#fcc808"></div>
<div style="left:819.90px;top:790.40px;width:57.80px;height:25.40px;background:#00f000"></div>
<div class="t" style="left:768.59px;top:792.06px;font-size:23.20px;color:#ffffff;transform:scaleX(0.8972)">MAP</div>
<div class="t" style="left:732.02px;top:813.51px;font-size:87.50px;color:#fcc808;transform:scaleX(0.9552);-webkit-text-stroke:0.90px #fcc808">326</div>
<div class="t" style="left:867.40px;top:874.12px;font-size:14.50px;color:#fcc808;transform:scaleX(0.8164);-webkit-text-stroke:0.3px #fcc808">kPa</div>
<div class="g" style="left:897.4px;top:787px;width:60px;height:107.5px"></div>
<svg style="position:absolute;left:683px;top:674px" width="217" height="109" viewBox="683 674 217 109">
<polygon fill="#8a8a8a" points="701.28,763.16 699.71,760.18 704.10,757.90 705.63,760.90"/>
<polygon fill="#f01010" points="707.09,759.03 705.28,755.45 709.73,753.23 711.50,756.84"/>
<polygon fill="#f8c000" points="713.43,755.90 711.39,751.68 715.88,749.54 717.87,753.78"/>
<polygon fill="#f8c000" points="719.82,752.88 717.56,748.01 722.10,745.94 724.29,750.83"/>
<polygon fill="#10ee10" points="726.25,749.96 723.80,744.42 728.38,742.43 730.76,748.00"/>
<polygon fill="#10ee10" points="732.74,747.15 730.11,740.93 734.73,739.01 737.28,745.27"/>
<polygon fill="#10ee10" points="739.28,744.46 736.48,737.52 741.14,735.68 743.85,742.65"/>
<polygon fill="#10ee10" points="745.86,741.88 742.92,734.21 747.62,732.44 750.46,740.15"/>
<polygon fill="#10ee10" points="752.48,739.41 749.42,730.99 754.15,729.30 757.11,737.76"/>
<polygon fill="#10ee10" points="759.14,737.05 755.98,727.86 760.75,726.25 763.80,735.48"/>
<polygon fill="#10ee10" points="765.84,734.81 762.60,724.83 767.40,723.30 770.53,733.32"/>
<polygon fill="#10ee10" points="772.58,732.68 769.28,721.89 774.12,720.44 777.30,731.27"/>
<polygon fill="#10ee10" points="779.36,730.67 776.02,719.05 780.89,717.68 784.09,729.34"/>
<polygon fill="#10ee10" points="786.17,728.77 782.81,716.31 787.72,715.02 790.93,727.52"/>
<polygon fill="#10ee10" points="793.01,726.99 789.66,713.67 794.60,712.46 797.79,725.82"/>
<polygon fill="#10ee10" points="799.88,725.33 796.57,711.13 801.53,710.01 804.67,724.24"/>
<polygon fill="#10ee10" points="806.77,723.78 803.53,708.69 808.52,707.65 811.59,722.78"/>
<polygon fill="#10ee10" points="813.70,722.35 810.54,706.36 815.56,705.40 818.53,721.43"/>
<polygon fill="#10ee10" points="820.64,721.04 817.60,704.12 822.65,703.25 825.49,720.20"/>
<polygon fill="#10ee10" points="827.61,719.85 824.71,702.00 829.78,701.20 832.47,719.09"/>
<polygon fill="#10ee10" points="834.59,718.78 831.87,699.97 836.97,699.27 839.47,718.10"/>
<polygon fill="#10ee10" points="841.60,717.83 839.08,698.06 844.20,697.44 846.48,717.23"/>
<polygon fill="#10ee10" points="848.62,716.99 846.33,696.25 851.47,695.71 853.51,716.48"/>
<polygon fill="#10ee10" points="855.65,716.28 853.63,694.55 858.79,694.10 860.55,715.85"/>
<polygon fill="#10ee10" points="862.69,715.68 860.97,692.96 866.15,692.60 867.60,715.34"/>
<polygon fill="#10ee10" points="869.74,715.21 868.35,691.48 873.55,691.21 874.66,714.95"/>
<polygon fill="#10ee10" points="876.80,714.86 875.77,690.11 880.98,689.93 881.72,714.68"/>
<polygon fill="#10ee10" points="883.87,714.62 883.24,688.86 888.46,688.76 888.78,714.53"/>
<polygon fill="#10ee10" points="890.93,714.51 890.73,687.71 895.97,687.71 895.85,714.50"/>
<polygon fill="#10ee10" points="898.00,714.52 898.27,686.69 903.52,686.77 902.92,714.60"/>
<polygon fill="#10ee10" points="905.07,714.65 905.84,685.77 911.10,685.95 909.98,714.81"/>
<polygon fill="#10ee10" points="912.13,714.90 913.44,684.98 918.71,685.24 917.04,715.14"/>
<polygon fill="#10ee10" points="919.19,715.27 921.07,684.30 926.35,684.65 924.10,715.59"/>
<path d="M 702.00 769.96 L 701.20 767.16 A 410.0 410.0 0 0 1 929.73 720.56" stroke="#10c010" stroke-width="1.6" fill="none"/>
<line x1="743.07" y1="747.79" x2="744.36" y2="751.05" stroke="#10c010" stroke-width="1.4"/>
<line x1="786.85" y1="733.25" x2="787.76" y2="736.63" stroke="#10c010" stroke-width="1.4"/>
<line x1="831.98" y1="723.72" x2="832.51" y2="727.18" stroke="#10c010" stroke-width="1.4"/>
<line x1="877.90" y1="719.32" x2="878.04" y2="722.81" stroke="#10c010" stroke-width="1.4"/>
</svg>
<div class="t" style="left:700.90px;top:768.16px;font-size:18.00px;color:#f0c020;transform:scaleX(1.0000)">0</div>
<div class="t" style="left:742.67px;top:749.16px;font-size:18.00px;color:#f0c020;transform:scaleX(1.0000)"><i class="o">1</i></div>
<div class="t" style="left:784.49px;top:736.26px;font-size:18.00px;color:#f0c020;transform:scaleX(1.0000)">2</div>
<div class="t" style="left:829.31px;top:726.46px;font-size:18.00px;color:#f0c020;transform:scaleX(1.0000)">3</div>
<div class="t" style="left:873.59px;top:721.86px;font-size:18.00px;color:#f0c020;transform:scaleX(1.0000)">4</div>
<div class="t" style="left:833.48px;top:726.60px;font-size:49.60px;color:#fcc808;transform:scaleX(1.0000);-webkit-text-stroke:0.5px #fcc808">6<i class="O">1</i>42</div>
</body></html>
